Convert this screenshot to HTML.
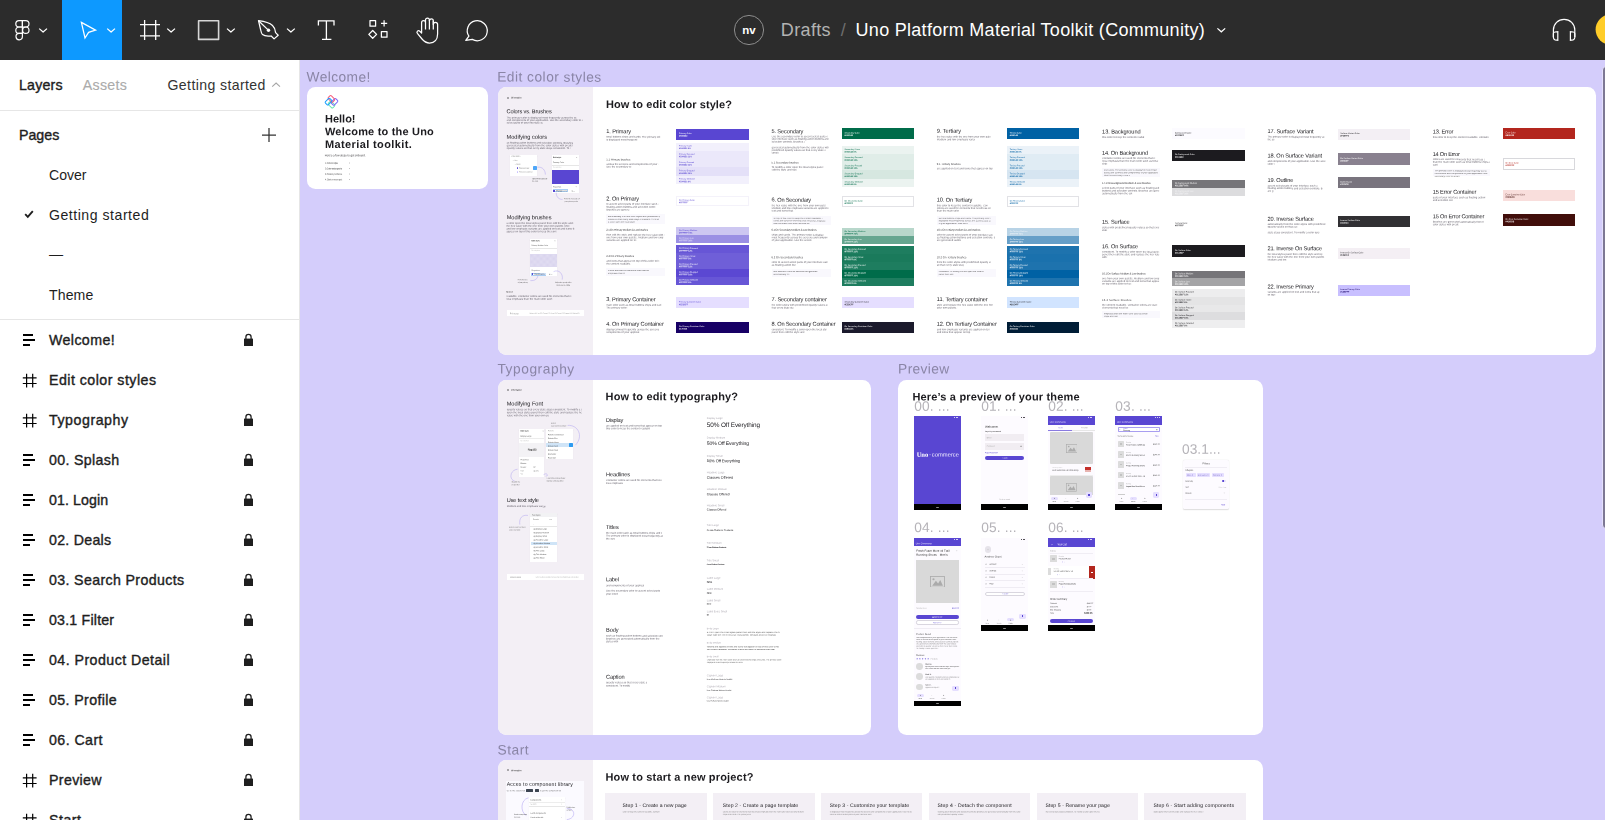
<!DOCTYPE html>
<html><head><meta charset="utf-8"><title>Uno Platform Material Toolkit (Community) – Figma</title>
<style>
*{box-sizing:border-box;margin:0;padding:0}
html,body{width:1605px;height:820px;overflow:hidden;background:#d4cdfb;font-family:"Liberation Sans",sans-serif;}
.abs{position:absolute}
#tb{position:absolute;left:0;top:0;width:1605px;height:60px;background:#2c2c2c}
#tb svg{position:absolute;overflow:visible}
#sel{position:absolute;left:62px;top:0;width:60px;height:60px;background:#0d99ff}
#title{position:absolute;top:0;height:60px;line-height:60px;font-size:17.5px;color:#fff;white-space:nowrap}
#lp{position:absolute;left:0;top:60px;width:300px;height:760px;background:#fff;border-right:1px solid #e6e6e6;overflow:hidden}
#lp .t{position:absolute;font-size:14.1px;line-height:20px;margin-top:0;color:#1e1e1e;white-space:nowrap}
#lp .b{margin-top:0;font-weight:normal;-webkit-text-stroke-width:0.38px;font-size:14.2px}
#lp svg{position:absolute;overflow:visible}
.hr{position:absolute;left:0;width:299px;height:1px;background:#e6e6e6}
#cv{position:absolute;left:0;top:0;width:1605px;height:820px;background:#d4cdfb;overflow:hidden}
#cvi{position:absolute;left:0;top:0;width:1605px;height:820px;will-change:transform;text-rendering:geometricPrecision}
#cv .a{position:absolute}
#cvs{position:absolute;left:0;top:0;width:1605px;height:820px;transform-origin:0 0;transform:matrix(1,.0006,0,1,0,0)}
#cv .t{position:absolute;left:0;top:0;white-space:nowrap}
.fl{position:absolute;font-size:15px;line-height:18px;color:#8b86a8;white-space:nowrap}
.fr{position:absolute;background:#fff;border-radius:8px;overflow:hidden}
.sb{position:absolute;left:0;top:0;bottom:0;background:#f3eff5}
</style></head><body>
<div id="cv">
<!--C0-->
<div id="cvi">
<div class="a" style="left:1602.4px;top:66.2px;width:8px;height:462.4px;background:#7d7894;border-radius:4px;border:1px solid #e4dffc"></div>
<div class="a" style="left:306.6px;top:87.2px;width:181.2px;height:101.9px;background:#fff;border-radius:8.5px;overflow:hidden">
</div>
<div class="a" style="left:497.9px;top:86.9px;width:1098.1px;height:268px;background:#fff;border-radius:8.5px;overflow:hidden">
<div class="a" style="left:0;top:0;width:95.1px;height:100%;background:#f3eff5"></div>
</div>
<div class="a" style="left:497.9px;top:379.9px;width:373.3px;height:355.4px;background:#fff;border-radius:8.5px;overflow:hidden">
<div class="a" style="left:0;top:0;width:95.1px;height:100%;background:#f3eff5"></div>
</div>
<div class="a" style="left:898px;top:379.9px;width:365.1px;height:355.4px;background:#fff;border-radius:8.5px;overflow:hidden">
</div>
<div class="a" style="left:497.9px;top:759.8px;width:765.2px;height:80.2px;background:#fff;border-radius:8.5px;overflow:hidden">
<div class="a" style="left:0;top:0;width:95.1px;height:100%;background:#f3eff5"></div>
</div>
<svg class="a" style="left:322px;top:92px" width="20" height="20" viewBox="322 92 20 20" fill="none" stroke-width=".95"><rect x="-3.2" y="-2.15" width="6.4" height="4.3" rx="1.1" transform="translate(331.5 104.7) rotate(45)" stroke="#67e5ad"/><rect x="-3.2" y="-2.15" width="6.4" height="4.3" rx="1.1" transform="translate(334.5 101.9) rotate(-45)" stroke="#7a67f8"/><rect x="-3.2" y="-2.15" width="6.4" height="4.3" rx="1.1" transform="translate(331.4 98.9) rotate(45)" stroke="#f85977"/><rect x="-3.2" y="-2.15" width="6.4" height="4.3" rx="1.1" transform="translate(328.5 101.6) rotate(-45)" stroke="#159bff"/></svg>
<div class="a" style="left:507px;top:96.6px;width:2.2px;height:2.2px;border:.4px solid #777;border-radius:50%"></div>
<div class="a" style="left:510.2px;top:154.5px;width:26.8px;height:21.4px;background:#fff;box-shadow:0 .3px 1px rgba(0,0,0,.12)"></div>
<div class="a" style="left:516.6px;top:167.3px;width:1.5px;height:1.5px;background:#5946d2;border-radius:50%"></div>
<div class="a" style="left:516.6px;top:171.1px;width:1.5px;height:1.5px;background:#c8bfff;border-radius:50%"></div>
<div class="a" style="left:533.2px;top:166px;width:3.8px;height:4.1px;background:#4ea6f8;border-radius:.4px"></div>
<svg class="a" style="left:537px;top:166px" width="12" height="12" viewBox="0 0 12 12" fill="none" stroke="#a89bf0" stroke-width=".45"><path d="M.4 1.2C5.6 .6 8.2 4 8.4 8.6"/></svg>
<div class="a" style="left:551.5px;top:155px;width:27.5px;height:37.9px;background:#fff;box-shadow:0 .3px 1px rgba(0,0,0,.12)"></div>
<div class="a" style="left:551.5px;top:165px;width:27.5px;height:0.3px;background:#e6e6e6"></div>
<div class="a" style="left:551.5px;top:170.1px;width:27.5px;height:13.7px;background:#5946d2"></div>
<div class="a" style="left:552.6px;top:189.2px;width:15.2px;height:3.2px;background:#fff;border:.35px solid #a9cdf2"></div>
<div class="a" style="left:553.4px;top:190px;width:1.7px;height:1.7px;background:#5946d2"></div>
<svg class="a" style="left:555px;top:192px" width="12" height="10" viewBox="0 0 12 10" fill="none" stroke="#a89bf0" stroke-width=".45"><path d="M1.2 .6C1.4 5.6 4 7.4 7.6 7.4"/></svg>
<div class="a" style="left:530.1px;top:238.5px;width:27px;height:37.6px;background:#fff;box-shadow:0 .3px 1px rgba(0,0,0,.12)"></div>
<div class="a" style="left:530.1px;top:247.6px;width:27px;height:0.3px;background:#e6e6e6"></div>
<div class="a" style="left:530.1px;top:253.7px;width:27px;height:13.7px;background:#dad5ee;background-image:repeating-conic-gradient(#e2def2 0 25%,#d8d3ed 0 50%);background-size:1.2px 1.2px"></div>
<div class="a" style="left:531px;top:272.6px;width:15.4px;height:3.1px;background:#fff;border:.35px solid #a9cdf2"></div>
<div class="a" style="left:531.8px;top:273.4px;width:1.6px;height:1.6px;background:#5946d2"></div>
<div class="a" style="left:540.4px;top:272.8px;width:5.6px;height:2.7px;background:#cfe2f7"></div>
<svg class="a" style="left:528px;top:268px" width="36" height="16" viewBox="0 0 36 16" fill="none" stroke="#a89bf0" stroke-width=".45"><path d="M2.4 12.6C7 13 9.6 10.6 9.8 7.8M25.6 3.6C31 1 35.4 6 34.2 11.6"/></svg>
<div class="a" style="left:506.7px;top:310.3px;width:77.1px;height:5.9px;background:#fff"></div>
<div class="a" style="left:676.3px;top:128.7px;width:72.5px;height:11.1px;background:#5946d2"></div>
<div class="a" style="left:676.3px;top:142.6px;width:72.5px;height:8.31px;background:#f2f0fc"></div>
<div class="a" style="left:676.3px;top:150.86px;width:72.5px;height:8.31px;background:#ebe8fa"></div>
<div class="a" style="left:676.3px;top:159.12px;width:72.5px;height:8.31px;background:#ebe8fa"></div>
<div class="a" style="left:676.3px;top:167.38px;width:72.5px;height:8.31px;background:#e4e0f8"></div>
<div class="a" style="left:676.3px;top:175.64px;width:72.5px;height:8.31px;background:#f2f0fc"></div>
<div class="a" style="left:676.3px;top:195.6px;width:72.5px;height:10.8px;background:#fff;border:.5px solid #f4f2fa"></div>
<div class="a" style="left:606.2px;top:214.3px;width:59.3px;height:9.5px;background:#f9f8fd"></div>
<div class="a" style="left:676.3px;top:227.3px;width:72.5px;height:7.7px;background:#cdc7f1"></div>
<div class="a" style="left:676.3px;top:235px;width:72.5px;height:7.9px;background:#9b90e4"></div>
<div class="a" style="left:676.3px;top:245.1px;width:72.5px;height:7.97px;background:#6756d6"></div>
<div class="a" style="left:676.3px;top:253.02px;width:72.5px;height:7.97px;background:#6f5fd8"></div>
<div class="a" style="left:676.3px;top:260.94px;width:72.5px;height:7.97px;background:#6f5fd8"></div>
<div class="a" style="left:676.3px;top:268.86px;width:72.5px;height:7.97px;background:#5b48d2"></div>
<div class="a" style="left:676.3px;top:276.78px;width:72.5px;height:7.97px;background:#6756d6"></div>
<div class="a" style="left:606.2px;top:268.2px;width:59.3px;height:8px;background:#f9f8fd"></div>
<div class="a" style="left:676.3px;top:297.1px;width:72.5px;height:11.4px;background:#e5deff"></div>
<div class="a" style="left:676.3px;top:321.5px;width:72.5px;height:11.5px;background:#170065"></div>
<div class="a" style="left:841.6px;top:128px;width:72.5px;height:11.2px;background:#006c4a"></div>
<div class="a" style="left:841.6px;top:146.1px;width:72.5px;height:8.17px;background:#ebf3f0"></div>
<div class="a" style="left:841.6px;top:154.22px;width:72.5px;height:8.17px;background:#e0ede8"></div>
<div class="a" style="left:841.6px;top:162.34px;width:72.5px;height:8.17px;background:#e0ede8"></div>
<div class="a" style="left:841.6px;top:170.46px;width:72.5px;height:8.17px;background:#d6e7e0"></div>
<div class="a" style="left:841.6px;top:178.58px;width:72.5px;height:8.17px;background:#ebf3f0"></div>
<div class="a" style="left:841.6px;top:196.2px;width:72.5px;height:11.1px;background:#fff;border:.5px solid #e2e2e6"></div>
<div class="a" style="left:771.5px;top:215.9px;width:59.3px;height:9.5px;background:#f9f8fd"></div>
<div class="a" style="left:841.6px;top:228.3px;width:72.5px;height:7.9px;background:#b8d7cb"></div>
<div class="a" style="left:841.6px;top:236.2px;width:72.5px;height:7.9px;background:#66a690"></div>
<div class="a" style="left:841.6px;top:246px;width:72.5px;height:7.99px;background:#1e7d5f"></div>
<div class="a" style="left:841.6px;top:253.94px;width:72.5px;height:7.99px;background:#1a7a5b"></div>
<div class="a" style="left:841.6px;top:261.88px;width:72.5px;height:7.99px;background:#1e7d5f"></div>
<div class="a" style="left:841.6px;top:269.82px;width:72.5px;height:7.99px;background:#006c4a"></div>
<div class="a" style="left:841.6px;top:277.76px;width:72.5px;height:7.99px;background:#1e7d5f"></div>
<div class="a" style="left:771.5px;top:269.2px;width:59.3px;height:7.9px;background:#f9f8fd"></div>
<div class="a" style="left:841.6px;top:297.1px;width:72.5px;height:11.4px;background:#e5deff"></div>
<div class="a" style="left:841.6px;top:321.5px;width:72.5px;height:11.5px;background:#1b1a2c"></div>
<div class="a" style="left:1006.9px;top:128px;width:72.5px;height:11.2px;background:#0061a4"></div>
<div class="a" style="left:1006.9px;top:146.1px;width:72.5px;height:8.17px;background:#ebf2f8"></div>
<div class="a" style="left:1006.9px;top:154.22px;width:72.5px;height:8.17px;background:#e0ecf4"></div>
<div class="a" style="left:1006.9px;top:162.34px;width:72.5px;height:8.17px;background:#e0ecf4"></div>
<div class="a" style="left:1006.9px;top:170.46px;width:72.5px;height:8.17px;background:#d6e5f1"></div>
<div class="a" style="left:1006.9px;top:178.58px;width:72.5px;height:8.17px;background:#ebf2f8"></div>
<div class="a" style="left:1006.9px;top:196.2px;width:72.5px;height:11.1px;background:#fff;border:.5px solid #e2e2e6"></div>
<div class="a" style="left:936.8px;top:215.9px;width:59.3px;height:9.5px;background:#f9f8fd"></div>
<div class="a" style="left:1006.9px;top:228.3px;width:72.5px;height:7.9px;background:#b8d3e6"></div>
<div class="a" style="left:1006.9px;top:236.2px;width:72.5px;height:7.9px;background:#669fc8"></div>
<div class="a" style="left:1006.9px;top:246px;width:72.5px;height:7.99px;background:#1e73ae"></div>
<div class="a" style="left:1006.9px;top:253.94px;width:72.5px;height:7.99px;background:#1a71ad"></div>
<div class="a" style="left:1006.9px;top:261.88px;width:72.5px;height:7.99px;background:#1e73ae"></div>
<div class="a" style="left:1006.9px;top:269.82px;width:72.5px;height:7.99px;background:#0061a4"></div>
<div class="a" style="left:1006.9px;top:277.76px;width:72.5px;height:7.99px;background:#1e73ae"></div>
<div class="a" style="left:936.8px;top:269.2px;width:59.3px;height:7.9px;background:#f9f8fd"></div>
<div class="a" style="left:1006.9px;top:297.1px;width:72.5px;height:11.4px;background:#d1e4ff"></div>
<div class="a" style="left:1006.9px;top:321.5px;width:72.5px;height:11.5px;background:#001d36"></div>
<div class="a" style="left:1172.2px;top:128px;width:72.5px;height:11.2px;background:#fcfbff"></div>
<div class="a" style="left:1172.2px;top:149.6px;width:72.5px;height:11.4px;background:#1c1b1f"></div>
<div class="a" style="left:1102.1px;top:167.7px;width:57.5px;height:9.5px;background:#f9f8fd"></div>
<div class="a" style="left:1172.2px;top:180px;width:72.5px;height:8px;background:#767579"></div>
<div class="a" style="left:1172.2px;top:188px;width:72.5px;height:8px;background:#dcdcde"></div>
<div class="a" style="left:1172.2px;top:218.4px;width:72.5px;height:11.1px;background:#fff"></div>
<div class="a" style="left:1172.2px;top:245.4px;width:72.5px;height:11.4px;background:#1c1b1f"></div>
<div class="a" style="left:1172.2px;top:270.5px;width:72.5px;height:7.9px;background:#767579"></div>
<div class="a" style="left:1172.2px;top:278.4px;width:72.5px;height:7.9px;background:#a4a4a6"></div>
<div class="a" style="left:1172.2px;top:288.9px;width:72.5px;height:7.85px;background:#ededee"></div>
<div class="a" style="left:1172.2px;top:296.7px;width:72.5px;height:7.85px;background:#e4e4e5"></div>
<div class="a" style="left:1172.2px;top:304.5px;width:72.5px;height:7.85px;background:#e8e8e9"></div>
<div class="a" style="left:1172.2px;top:312.3px;width:72.5px;height:7.85px;background:#dddddf"></div>
<div class="a" style="left:1172.2px;top:320.1px;width:72.5px;height:7.85px;background:#eeeeef"></div>
<div class="a" style="left:1102.1px;top:311.4px;width:57.5px;height:7px;background:#f9f8fd"></div>
<div class="a" style="left:1337.5px;top:128.7px;width:72.5px;height:11.1px;background:#f3eff4"></div>
<div class="a" style="left:1337.5px;top:153.4px;width:72.5px;height:11.4px;background:#89818f"></div>
<div class="a" style="left:1337.5px;top:177.2px;width:72.5px;height:11.1px;background:#79747e"></div>
<div class="a" style="left:1337.5px;top:215.5px;width:72.5px;height:11.4px;background:#313033"></div>
<div class="a" style="left:1337.5px;top:247.8px;width:72.5px;height:11.1px;background:#f4eff4"></div>
<div class="a" style="left:1337.5px;top:284.6px;width:72.5px;height:11.1px;background:#c8bfff"></div>
<div class="a" style="left:1502.8px;top:128px;width:72.5px;height:11.1px;background:#b3261e"></div>
<div class="a" style="left:1502.8px;top:157.8px;width:72.5px;height:11.8px;background:#fff;border:.5px solid #d8d8dc"></div>
<div class="a" style="left:1432.7px;top:168.6px;width:57.2px;height:7.6px;background:#f9f8fd"></div>
<div class="a" style="left:1502.8px;top:189.8px;width:72.5px;height:11.1px;background:#f9dedc"></div>
<div class="a" style="left:1502.8px;top:214.2px;width:72.5px;height:11.5px;background:#410e0b"></div>
<div class="a" style="left:507.2px;top:388.9px;width:2.2px;height:2.2px;border:.4px solid #777;border-radius:50%"></div>
<div class="a" style="left:518.9px;top:428.5px;width:25.5px;height:48.5px;background:#fff;box-shadow:0 .3px 1px rgba(0,0,0,.12)"></div>
<div class="a" style="left:518.9px;top:438.3px;width:25.5px;height:0.3px;background:#ececec"></div>
<div class="a" style="left:518.9px;top:442.8px;width:25.5px;height:13.8px;background:#f3f2f5"></div>
<div class="a" style="left:546.2px;top:428.5px;width:26.8px;height:30px;background:#fff;box-shadow:0 .3px 1px rgba(0,0,0,.12)"></div>
<div class="a" style="left:546.2px;top:443.4px;width:26.8px;height:3.6px;background:#cfe4f7"></div>
<div class="a" style="left:569px;top:443.4px;width:4px;height:3.6px;background:#2e9bf0;border-radius:.4px"></div>
<svg class="a" style="left:505px;top:420px" width="80" height="70" viewBox="505 420 80 70" fill="none" stroke="#a89bf0" stroke-width=".45"><path d="M567.6 425.4C578 424.6 584 436 575.4 445.2M517.6 469.2C509.6 470 509 479.8 514.6 481M543.6 474.6C547.6 472 548.6 476.6 545.6 476.2"/></svg>
<div class="a" style="left:530.4px;top:512.9px;width:26.8px;height:49.2px;background:#fff;box-shadow:0 .3px 1px rgba(0,0,0,.12)"></div>
<div class="a" style="left:530.4px;top:512.9px;width:26.8px;height:4.4px;background:#f2f2f4"></div>
<div class="a" style="left:530.4px;top:526.2px;width:26.8px;height:0.3px;background:#e6e6e6"></div>
<div class="a" style="left:530.9px;top:541.9px;width:25.8px;height:3px;background:#cfe4f7"></div>
<svg class="a" style="left:515px;top:510px" width="20" height="16" viewBox="515 510 20 16" fill="none" stroke="#a89bf0" stroke-width=".45"><path d="M519.8 524.6C519 518 522 514.6 528 515.4"/></svg>
<div class="a" style="left:506.6px;top:573.7px;width:77.6px;height:6.7px;background:#fff"></div>
<div class="a" style="left:914.2px;top:416.1px;width:46.7px;height:93.6px;background:#5946d2"></div>
<div class="a" style="left:914.2px;top:504.3px;width:46.7px;height:5.4px;background:#000"></div>
<div class="a" style="left:935.7px;top:506.7px;width:3.4px;height:0.8px;background:#8a8a8a;border-radius:.4px"></div>
<div class="a" style="left:953.8px;top:417.1px;width:1px;height:1px;background:#fff;border-radius:50%"></div>
<div class="a" style="left:955.6px;top:417.1px;width:1px;height:1px;background:#fff;border-radius:50%"></div>
<div class="a" style="left:957.4px;top:417.1px;width:1px;height:1px;background:#fff;border-radius:50%"></div>
<div class="a" style="left:981.2px;top:416.1px;width:46.7px;height:93.6px;background:#fdfbff"></div>
<div class="a" style="left:981.2px;top:504.3px;width:46.7px;height:5.4px;background:#000"></div>
<div class="a" style="left:1002.7px;top:506.7px;width:3.4px;height:0.8px;background:#8a8a8a;border-radius:.4px"></div>
<div class="a" style="left:1020.8px;top:417.1px;width:1px;height:1px;background:#1c1b1f;border-radius:50%"></div>
<div class="a" style="left:1022.6px;top:417.1px;width:1px;height:1px;background:#1c1b1f;border-radius:50%"></div>
<div class="a" style="left:1024.4px;top:417.1px;width:1px;height:1px;background:#1c1b1f;border-radius:50%"></div>
<div class="a" style="left:985px;top:434.4px;width:39px;height:6.7px;background:#f1edf2"></div>
<div class="a" style="left:985px;top:443px;width:39px;height:6.7px;background:#f1edf2"></div>
<div class="a" style="left:985px;top:455.8px;width:39px;height:4px;background:#5946d2;border-radius:2px"></div>
<div class="a" style="left:1048.2px;top:416.1px;width:46.7px;height:93.6px;background:#fdfbff"></div>
<div class="a" style="left:1048.2px;top:504.3px;width:46.7px;height:5.4px;background:#000"></div>
<div class="a" style="left:1069.7px;top:506.7px;width:3.4px;height:0.8px;background:#8a8a8a;border-radius:.4px"></div>
<div class="a" style="left:1087.8px;top:417.1px;width:1px;height:1px;background:#1c1b1f;border-radius:50%"></div>
<div class="a" style="left:1089.6px;top:417.1px;width:1px;height:1px;background:#1c1b1f;border-radius:50%"></div>
<div class="a" style="left:1091.4px;top:417.1px;width:1px;height:1px;background:#1c1b1f;border-radius:50%"></div>
<div class="a" style="left:1048.2px;top:416.1px;width:46.7px;height:8.6px;background:#5946d2"></div>
<div class="a" style="left:1087.8px;top:417.1px;width:1px;height:1px;background:#fff;border-radius:50%"></div>
<div class="a" style="left:1089.6px;top:417.1px;width:1px;height:1px;background:#fff;border-radius:50%"></div>
<div class="a" style="left:1091.4px;top:417.1px;width:1px;height:1px;background:#fff;border-radius:50%"></div>
<div class="a" style="left:1048.2px;top:430.3px;width:23.4px;height:0.35px;background:#8a7be0"></div>
<div class="a" style="left:1071.6px;top:430.4px;width:23.3px;height:0.25px;background:#e6e6e6"></div>
<div class="a" style="left:1050.2px;top:432.3px;width:42.8px;height:31.7px;background:#d9d9d9;border-radius:1px"></div>
<svg class="a" style="left:1065.83px;top:443.64px" width="11.55" height="9.03" viewBox="0 0 11 8.6" fill="none"><rect x=".3" y=".3" width="10.4" height="8" stroke="#ababab" stroke-width=".6"/><path d="M1.6 7.2L4.4 3.6 6 5.6 7.6 3 9.6 7.2z" fill="#ababab"/><circle cx="2.6" cy="2.4" r=".8" fill="#ababab"/></svg>
<div class="a" style="left:1085px;top:466.6px;width:6.2px;height:5.2px;background:#c4302b"></div>
<div class="a" style="left:1085px;top:470px;width:6.2px;height:1.8px;background:#e8b4b1"></div>
<div class="a" style="left:1049.8px;top:474.6px;width:43.6px;height:0.25px;background:#eee"></div>
<div class="a" style="left:1050.2px;top:476.3px;width:42.8px;height:22px;background:#d9d9d9;border-radius:1px"></div>
<svg class="a" style="left:1066.1px;top:483px" width="11" height="8.6" viewBox="0 0 11 8.6" fill="none"><rect x=".3" y=".3" width="10.4" height="8" stroke="#ababab" stroke-width=".6"/><path d="M1.6 7.2L4.4 3.6 6 5.6 7.6 3 9.6 7.2z" fill="#ababab"/><circle cx="2.6" cy="2.4" r=".8" fill="#ababab"/></svg>
<div class="a" style="left:1048.2px;top:495px;width:46.7px;height:9.3px;background:#fdfbff"></div>
<div class="a" style="left:1050.8px;top:496.6px;width:7.2px;height:3.2px;background:#e5deff;border-radius:1.6px"></div>
<div class="a" style="left:1086.2px;top:492.4px;width:6.2px;height:5.6px;background:#e5deff;border-radius:1.4px"></div>
<div class="a" style="left:1088.4px;top:494.2px;width:1.8px;height:1.9px;background:#5946d2"></div>
<div class="a" style="left:1115.3px;top:416.1px;width:46.7px;height:93.6px;background:#fdfbff"></div>
<div class="a" style="left:1115.3px;top:504.3px;width:46.7px;height:5.4px;background:#000"></div>
<div class="a" style="left:1136.8px;top:506.7px;width:3.4px;height:0.8px;background:#8a8a8a;border-radius:.4px"></div>
<div class="a" style="left:1154.9px;top:417.1px;width:1px;height:1px;background:#1c1b1f;border-radius:50%"></div>
<div class="a" style="left:1156.7px;top:417.1px;width:1px;height:1px;background:#1c1b1f;border-radius:50%"></div>
<div class="a" style="left:1158.5px;top:417.1px;width:1px;height:1px;background:#1c1b1f;border-radius:50%"></div>
<div class="a" style="left:1115.3px;top:416.1px;width:46.7px;height:8.6px;background:#5946d2"></div>
<div class="a" style="left:1154.9px;top:417.1px;width:1px;height:1px;background:#fff;border-radius:50%"></div>
<div class="a" style="left:1156.7px;top:417.1px;width:1px;height:1px;background:#fff;border-radius:50%"></div>
<div class="a" style="left:1158.5px;top:417.1px;width:1px;height:1px;background:#fff;border-radius:50%"></div>
<div class="a" style="left:1117.5px;top:426.6px;width:42.4px;height:5.6px;background:#fff;border:.4px solid #a89df0;border-radius:.8px"></div>
<div class="a" style="left:1117.5px;top:440.6px;width:6.6px;height:6.6px;background:#dcdcdc;border-radius:.6px"></div>
<div class="a" style="left:1119.6px;top:443.1px;width:2.4px;height:1.6px;background:#c2c2c2"></div>
<div class="a" style="left:1117.5px;top:451px;width:6.6px;height:6.6px;background:#dcdcdc;border-radius:.6px"></div>
<div class="a" style="left:1119.6px;top:453.5px;width:2.4px;height:1.6px;background:#c2c2c2"></div>
<div class="a" style="left:1117.5px;top:461.4px;width:6.6px;height:6.6px;background:#dcdcdc;border-radius:.6px"></div>
<div class="a" style="left:1119.6px;top:463.9px;width:2.4px;height:1.6px;background:#c2c2c2"></div>
<div class="a" style="left:1117.5px;top:471.8px;width:6.6px;height:6.6px;background:#dcdcdc;border-radius:.6px"></div>
<div class="a" style="left:1119.6px;top:474.3px;width:2.4px;height:1.6px;background:#c2c2c2"></div>
<div class="a" style="left:1117.5px;top:482.2px;width:6.6px;height:6.6px;background:#dcdcdc;border-radius:.6px"></div>
<div class="a" style="left:1119.6px;top:484.7px;width:2.4px;height:1.6px;background:#c2c2c2"></div>
<div class="a" style="left:1117.5px;top:494.3px;width:7px;height:0.3px;background:#ccc"></div>
<div class="a" style="left:1115.3px;top:495.4px;width:46.7px;height:8.9px;background:#fdfbff"></div>
<div class="a" style="left:1129.5px;top:496.6px;width:7.2px;height:3.2px;background:#e5deff;border-radius:1.6px"></div>
<div class="a" style="left:1153.3px;top:492.4px;width:6.2px;height:5.6px;background:#e5deff;border-radius:1.4px"></div>
<div class="a" style="left:1155.5px;top:494.2px;width:1.8px;height:1.9px;background:#5946d2"></div>
<div class="a" style="left:1182.9px;top:459.6px;width:45.7px;height:49px;background:#fdfbff;border-radius:1.6px;box-shadow:0 .4px 1.2px rgba(0,0,0,.14)"></div>
<div class="a" style="left:1184.9px;top:467.2px;width:41.7px;height:0.25px;background:#f0edf4"></div>
<div class="a" style="left:1185.5px;top:473.4px;width:10px;height:3.4px;background:#e5deff;border-radius:.8px"></div>
<div class="a" style="left:1196.7px;top:473.4px;width:13.6px;height:3.4px;background:#e5deff;border-radius:.8px"></div>
<div class="a" style="left:1211.5px;top:473.4px;width:12.4px;height:3.4px;background:#e5deff;border-radius:.8px"></div>
<div class="a" style="left:1222.3px;top:479.8px;width:4px;height:2.4px;background:#5946d2;border-radius:1.2px"></div>
<div class="a" style="left:1224.4px;top:480.2px;width:1.6px;height:1.6px;background:#fff;border-radius:50%"></div>
<div class="a" style="left:1184.9px;top:499.4px;width:41.7px;height:0.25px;background:#f0edf4"></div>
<div class="a" style="left:914.2px;top:537.6px;width:46.7px;height:168.4px;background:#fdfbff"></div>
<div class="a" style="left:914.2px;top:700.6px;width:46.7px;height:5.4px;background:#000"></div>
<div class="a" style="left:935.7px;top:703px;width:3.4px;height:0.8px;background:#8a8a8a;border-radius:.4px"></div>
<div class="a" style="left:953.8px;top:538.6px;width:1px;height:1px;background:#1c1b1f;border-radius:50%"></div>
<div class="a" style="left:955.6px;top:538.6px;width:1px;height:1px;background:#1c1b1f;border-radius:50%"></div>
<div class="a" style="left:957.4px;top:538.6px;width:1px;height:1px;background:#1c1b1f;border-radius:50%"></div>
<div class="a" style="left:914.2px;top:537.6px;width:46.7px;height:8.6px;background:#5946d2"></div>
<div class="a" style="left:953.8px;top:538.6px;width:1px;height:1px;background:#fff;border-radius:50%"></div>
<div class="a" style="left:955.6px;top:538.6px;width:1px;height:1px;background:#fff;border-radius:50%"></div>
<div class="a" style="left:957.4px;top:538.6px;width:1px;height:1px;background:#fff;border-radius:50%"></div>
<div class="a" style="left:916.2px;top:560.2px;width:42.8px;height:42.8px;background:#d9d9d9;border-radius:0px"></div>
<svg class="a" style="left:930.18px;top:575.8px" width="14.85" height="11.61" viewBox="0 0 11 8.6" fill="none"><rect x=".3" y=".3" width="10.4" height="8" stroke="#ababab" stroke-width=".6"/><path d="M1.6 7.2L4.4 3.6 6 5.6 7.6 3 9.6 7.2z" fill="#ababab"/><circle cx="2.6" cy="2.4" r=".8" fill="#ababab"/></svg>
<div class="a" style="left:916.2px;top:614.8px;width:42.8px;height:4px;background:#5946d2;border-radius:2px"></div>
<div class="a" style="left:916.2px;top:620.4px;width:42.8px;height:4.2px;background:#fff;border:.35px solid #d9d6df;border-radius:2.1px"></div>
<div class="a" style="left:914.2px;top:627.6px;width:46.7px;height:0.3px;background:#efecf3"></div>
<div class="a" style="left:916.2px;top:662.8px;width:6.8px;height:6.8px;background:#dcdcdc;border-radius:50%"></div>
<div class="a" style="left:916.2px;top:673.2px;width:6.8px;height:6.8px;background:#dcdcdc;border-radius:50%"></div>
<div class="a" style="left:916.2px;top:683.6px;width:6.8px;height:6.8px;background:#dcdcdc;border-radius:50%"></div>
<div class="a" style="left:914.2px;top:691.6px;width:46.7px;height:9.6px;background:#fdfbff"></div>
<div class="a" style="left:916.8px;top:693.6px;width:7.2px;height:3.2px;background:#e5deff;border-radius:1.6px"></div>
<div class="a" style="left:952.4px;top:685.6px;width:6.2px;height:5.6px;background:#e5deff;border-radius:1.4px"></div>
<div class="a" style="left:954.6px;top:687.4px;width:1.8px;height:1.9px;background:#5946d2"></div>
<div class="a" style="left:981.2px;top:537.6px;width:46.7px;height:93.2px;background:#fdfbff"></div>
<div class="a" style="left:981.2px;top:625.4px;width:46.7px;height:5.4px;background:#000"></div>
<div class="a" style="left:1002.7px;top:627.8px;width:3.4px;height:0.8px;background:#8a8a8a;border-radius:.4px"></div>
<div class="a" style="left:1020.8px;top:538.6px;width:1px;height:1px;background:#1c1b1f;border-radius:50%"></div>
<div class="a" style="left:1022.6px;top:538.6px;width:1px;height:1px;background:#1c1b1f;border-radius:50%"></div>
<div class="a" style="left:1024.4px;top:538.6px;width:1px;height:1px;background:#1c1b1f;border-radius:50%"></div>
<div class="a" style="left:984.6px;top:546px;width:6.6px;height:6.6px;background:#e6e3ea;border-radius:50%"></div>
<div class="a" style="left:984.6px;top:567.4px;width:40.4px;height:0.25px;background:#efecf3"></div>
<div class="a" style="left:984.6px;top:573.9px;width:40.4px;height:0.25px;background:#efecf3"></div>
<div class="a" style="left:984.6px;top:580.4px;width:40.4px;height:0.25px;background:#efecf3"></div>
<div class="a" style="left:984.6px;top:586.9px;width:40.4px;height:0.25px;background:#efecf3"></div>
<div class="a" style="left:984.6px;top:591.6px;width:40.6px;height:4px;background:#fff;border:.35px solid #d9d6df;border-radius:2px"></div>
<div class="a" style="left:981.2px;top:616.4px;width:46.7px;height:9px;background:#fdfbff"></div>
<div class="a" style="left:1007px;top:618.2px;width:7.2px;height:3.2px;background:#e5deff;border-radius:1.6px"></div>
<div class="a" style="left:1019.4px;top:613.6px;width:6.2px;height:5.6px;background:#e5deff;border-radius:1.4px"></div>
<div class="a" style="left:1021.6px;top:615.4px;width:1.8px;height:1.9px;background:#5946d2"></div>
<div class="a" style="left:1048.2px;top:537.6px;width:46.7px;height:93.2px;background:#fdfbff"></div>
<div class="a" style="left:1048.2px;top:625.4px;width:46.7px;height:5.4px;background:#000"></div>
<div class="a" style="left:1069.7px;top:627.8px;width:3.4px;height:0.8px;background:#8a8a8a;border-radius:.4px"></div>
<div class="a" style="left:1087.8px;top:538.6px;width:1px;height:1px;background:#1c1b1f;border-radius:50%"></div>
<div class="a" style="left:1089.6px;top:538.6px;width:1px;height:1px;background:#1c1b1f;border-radius:50%"></div>
<div class="a" style="left:1091.4px;top:538.6px;width:1px;height:1px;background:#1c1b1f;border-radius:50%"></div>
<div class="a" style="left:1048.2px;top:537.6px;width:46.7px;height:9.6px;background:#5946d2"></div>
<div class="a" style="left:1087.8px;top:538.6px;width:1px;height:1px;background:#fff;border-radius:50%"></div>
<div class="a" style="left:1089.6px;top:538.6px;width:1px;height:1px;background:#fff;border-radius:50%"></div>
<div class="a" style="left:1091.4px;top:538.6px;width:1px;height:1px;background:#fff;border-radius:50%"></div>
<div class="a" style="left:1049.8px;top:553px;width:43.6px;height:0.25px;background:#f0edf4"></div>
<div class="a" style="left:1050.2px;top:555.4px;width:7px;height:7px;background:#dcdcdc;border-radius:.6px"></div>
<div class="a" style="left:1052.4px;top:558.1px;width:2.6px;height:1.7px;background:#c2c2c2"></div>
<div class="a" style="left:1049.8px;top:565.8px;width:43.6px;height:0.25px;background:#f0edf4"></div>
<div class="a" style="left:1048.2px;top:566.4px;width:46.7px;height:12.2px;background:#fff"></div>
<div class="a" style="left:1089px;top:566.4px;width:5.9px;height:12.2px;background:#b3261e"></div>
<div class="a" style="left:1091.2px;top:571.6px;width:1.5px;height:1.8px;background:#fff"></div>
<div class="a" style="left:1048.2px;top:568px;width:2.4px;height:7px;background:#dcdcdc"></div>
<div class="a" style="left:1049.8px;top:578.4px;width:43.6px;height:0.25px;background:#f0edf4"></div>
<div class="a" style="left:1050.2px;top:580.6px;width:7px;height:7px;background:#dcdcdc;border-radius:.6px"></div>
<div class="a" style="left:1052.4px;top:583.3px;width:2.6px;height:1.7px;background:#c2c2c2"></div>
<div class="a" style="left:1049.8px;top:591px;width:43.6px;height:0.25px;background:#f0edf4"></div>
<div class="a" style="left:1050.2px;top:619.2px;width:42.8px;height:4px;background:#5946d2;border-radius:2px"></div>
<div class="a" style="left:507px;top:769.3px;width:2.2px;height:2.2px;border:.4px solid #777;border-radius:50%"></div>
<div class="a" style="left:506.2px;top:781.1px;width:78px;height:60px;background:#fbfaff"></div>
<div class="a" style="left:526.1px;top:789.4px;width:6.8px;height:2.4px;background:#3c4451;border-radius:.5px"></div>
<div class="a" style="left:535px;top:789.4px;width:3.6px;height:2.4px;background:#3c4451;border-radius:.5px"></div>
<div class="a" style="left:528.6px;top:797.3px;width:36.2px;height:30px;background:#fff;box-shadow:0 .3px 1px rgba(0,0,0,.12)"></div>
<div class="a" style="left:528.6px;top:806.2px;width:36.2px;height:0.3px;background:#e6e6e6"></div>
<div class="a" style="left:528.6px;top:801.9px;width:36.2px;height:0.3px;background:#ededed"></div>
<svg class="a" style="left:515px;top:795px" width="70" height="30" viewBox="515 795 70 30" fill="none" stroke="#a89bf0" stroke-width=".5"><path d="M528.4 797.8C520.4 799.6 520 812 526.4 815.6M566.8 808.6C575.4 807.6 576.6 818.6 566.8 819.6"/></svg>
<div class="a" style="left:605.4px;top:793.1px;width:101.4px;height:40px;background:#f3eff5"></div>
<div class="a" style="left:713.2px;top:793.1px;width:101.4px;height:40px;background:#f3eff5"></div>
<div class="a" style="left:821px;top:793.1px;width:101.4px;height:40px;background:#f3eff5"></div>
<div class="a" style="left:928.8px;top:793.1px;width:101.4px;height:40px;background:#f3eff5"></div>
<div class="a" style="left:1036.6px;top:793.1px;width:101.4px;height:40px;background:#f3eff5"></div>
<div class="a" style="left:1144.4px;top:793.1px;width:101.4px;height:40px;background:#f3eff5"></div>
<div id="cvs">
<div class="t" style="transform:translate(306.6px,68.41px);font-size:13.75px;line-height:18px;color:#8a85a6;letter-spacing:0.40px">Welcome!</div>
<div class="t" style="transform:translate(497.2px,68.29px);font-size:13.75px;line-height:18px;color:#8a85a6;letter-spacing:0.48px">Edit color styles</div>
<div class="t" style="transform:translate(497.4px,360.29px);font-size:13.75px;line-height:18px;color:#8a85a6;letter-spacing:0.55px">Typography</div>
<div class="t" style="transform:translate(898.1px,360.05px);font-size:13.75px;line-height:18px;color:#8a85a6;letter-spacing:0.36px">Preview</div>
<div class="t" style="transform:translate(497.5px,741.29px);font-size:13.75px;line-height:18px;color:#8a85a6;letter-spacing:0.51px">Start</div>
<div class="t" style="transform:translate(325px,112.19px);font-size:11px;line-height:14px;color:#1c1b1f;font-weight:bold;letter-spacing:-0.01px">Hello!</div>
<div class="t" style="transform:translate(325px,124.99px);font-size:11px;line-height:14px;color:#1c1b1f;font-weight:bold;letter-spacing:0.19px">Welcome to the Uno</div>
<div class="t" style="transform:translate(325px,137.69px);font-size:11px;line-height:14px;color:#1c1b1f;font-weight:bold;letter-spacing:0.38px">Material toolkit.</div>
<div class="t" style="transform:translate(324.7px,154.14px);font-size:2.75px;line-height:4px;color:#1c1b1f;letter-spacing:-0.03px">Here's a few steps to get onboard.</div>
<div class="t" style="transform:translate(325px,162.64px);font-size:2.2px;line-height:3px;color:#555;letter-spacing:-0.24px">1. Edit color styles</div>
<div class="t" style="transform:translate(349px,161.63px);font-size:2.4px;line-height:3px;color:#333">•</div>
<div class="t" style="transform:translate(325px,168.14px);font-size:2.2px;line-height:3px;color:#555;letter-spacing:-0.32px">2. Customize typography</div>
<div class="t" style="transform:translate(349px,167.13px);font-size:2.4px;line-height:3px;color:#333">•</div>
<div class="t" style="transform:translate(325px,173.64px);font-size:2.2px;line-height:3px;color:#555;letter-spacing:-0.23px">3. Preview your theme</div>
<div class="t" style="transform:translate(349px,172.63px);font-size:2.4px;line-height:3px;color:#333">•</div>
<div class="t" style="transform:translate(325px,179.14px);font-size:2.2px;line-height:3px;color:#555;letter-spacing:-0.17px">4. Start a new project</div>
<div class="t" style="transform:translate(349px,178.13px);font-size:2.4px;line-height:3px;color:#333">•</div>
<div class="t" style="transform:translate(511px,96.23px);font-size:2.4px;line-height:3px;color:#333;letter-spacing:-0.12px">information</div>
<div class="t" style="transform:translate(506.5px,108.02px);font-size:5.65px;line-height:8px;color:#1c1b1f;letter-spacing:-0.12px">Colors vs. Brushes</div>
<div class="t" style="transform:translate(506.5px,116.1px);font-size:2.65px;line-height:4px;color:#5f5b66;width:70px;overflow:hidden">The primary color is displayed most frequently across the screens</div>
<div class="t" style="transform:translate(506.5px,118.7px);font-size:2.65px;line-height:4px;color:#5f5b66;width:75.8px;overflow:hidden">and components of your application. Use the secondary color to accent</div>
<div class="t" style="transform:translate(506.5px,121.3px);font-size:2.65px;line-height:4px;color:#5f5b66;width:36px;overflow:hidden">select parts of your interface such</div>
<div class="t" style="transform:translate(506.5px,133.52px);font-size:5.65px;line-height:8px;color:#1c1b1f;letter-spacing:-0.02px">Modifying colors</div>
<div class="t" style="transform:translate(506.5px,141.3px);font-size:2.65px;line-height:4px;color:#5f5b66;width:66.5px;overflow:hidden">as floating action buttons and selection controls. Brushes are</div>
<div class="t" style="transform:translate(506.5px,144px);font-size:2.65px;line-height:4px;color:#5f5b66;width:66px;overflow:hidden">generated automatically from the color styles with predefined</div>
<div class="t" style="transform:translate(506.5px,146.7px);font-size:2.65px;line-height:4px;color:#5f5b66;width:64px;overflow:hidden">opacity values so that every state stays consistent. To modify</div>
<div class="t" style="transform:translate(511.5px,155.54px);font-size:1.7px;line-height:3px;color:#555">Color styles</div>
<div class="t" style="transform:translate(512.5px,159.74px);font-size:1.7px;line-height:3px;color:#777">⌄ Uno</div>
<div class="t" style="transform:translate(514.5px,163.54px);font-size:1.7px;line-height:3px;color:#777">⌄ Brush</div>
<div class="t" style="transform:translate(519px,167.44px);font-size:1.7px;line-height:3px;color:#555">Primary Color</div>
<div class="t" style="transform:translate(519px,171.24px);font-size:1.7px;line-height:3px;color:#777">Primary Container</div>
<div class="t" style="transform:translate(532px,177.83px);font-size:1.7px;line-height:3px;color:#555;letter-spacing:-0.22px">Click on Primary color to edit</div>
<div class="t" style="transform:translate(532px,180.33px);font-size:1.7px;line-height:3px;color:#555">the style</div>
<div class="t" style="transform:translate(553px,156.64px);font-size:1.9px;line-height:3px;color:#333;font-weight:bold">Edit style</div>
<div class="t" style="transform:translate(576px,156.79px);font-size:2.2px;line-height:3px;color:#777">×</div>
<div class="t" style="transform:translate(553px,161.71px);font-size:1.8px;line-height:3px;color:#444">Primary Color</div>
<div class="t" style="transform:translate(553px,166.52px);font-size:1.7px;line-height:3px;color:#bbb">Description</div>
<div class="t" style="transform:translate(553px,186.21px);font-size:1.8px;line-height:3px;color:#555">Properties</div>
<div class="t" style="transform:translate(575.5px,186.2px);font-size:2px;line-height:3px;color:#777">+</div>
<div class="t" style="transform:translate(556px,190.21px);font-size:1.8px;line-height:3px;color:#333">5946D2</div>
<div class="t" style="transform:translate(562.6px,190.21px);font-size:1.7px;line-height:3px;color:#666">100%</div>
<div class="t" style="transform:translate(571.5px,191.06px);font-size:1.6px;line-height:2px;color:#888">◉  —</div>
<div class="t" style="transform:translate(564px,197.91px);font-size:1.7px;line-height:3px;color:#555;letter-spacing:-0.04px">Paste the hex code of</div>
<div class="t" style="transform:translate(564.6px,200.61px);font-size:1.7px;line-height:3px;color:#555;letter-spacing:-0.01px">your primary color</div>
<div class="t" style="transform:translate(506.7px,213.82px);font-size:5.65px;line-height:8px;color:#1c1b1f;letter-spacing:-0.06px">Modifying brushes</div>
<div class="t" style="transform:translate(506.3px,221.7px);font-size:2.65px;line-height:4px;color:#5f5b66;width:66.8px;overflow:hidden">a color open the local styles panel then edit the style and replace</div>
<div class="t" style="transform:translate(506.3px,224.5px);font-size:2.65px;line-height:4px;color:#5f5b66;width:63px;overflow:hidden">the hex value with the one from your own palette. Medium</div>
<div class="t" style="transform:translate(506.3px,227.2px);font-size:2.65px;line-height:4px;color:#5f5b66;width:67.7px;overflow:hidden">and low emphasis variants are applied on text and icons that</div>
<div class="t" style="transform:translate(506.3px,229.9px);font-size:2.65px;line-height:4px;color:#5f5b66;width:50px;overflow:hidden">appear on top of this color to keep the content</div>
<div class="t" style="transform:translate(531.4px,239.95px);font-size:1.9px;line-height:3px;color:#333;font-weight:bold">Edit style</div>
<div class="t" style="transform:translate(554.2px,240.11px);font-size:2.2px;line-height:3px;color:#777">×</div>
<div class="t" style="transform:translate(531.4px,244.73px);font-size:1.7px;line-height:3px;color:#444">Primary Medium Color</div>
<div class="t" style="transform:translate(531.4px,249.73px);font-size:1.7px;line-height:3px;color:#bbb">Description</div>
<div class="t" style="transform:translate(531.4px,269.73px);font-size:1.8px;line-height:3px;color:#555">Properties</div>
<div class="t" style="transform:translate(534.3px,273.52px);font-size:1.8px;line-height:3px;color:#333">5946D2</div>
<div class="t" style="transform:translate(541px,273.52px);font-size:1.7px;line-height:3px;color:#335">60%</div>
<div class="t" style="transform:translate(549px,274.37px);font-size:1.6px;line-height:2px;color:#888">◉  —</div>
<div class="t" style="transform:translate(517.8px,278.94px);font-size:1.7px;line-height:3px;color:#555;letter-spacing:-0.07px">Paste the hex</div>
<div class="t" style="transform:translate(517.8px,281.64px);font-size:1.7px;line-height:3px;color:#555;letter-spacing:-0.09px">of your primary</div>
<div class="t" style="transform:translate(555.3px,281.62px);font-size:1.7px;line-height:3px;color:#555;letter-spacing:-0.07px">Adjust the opacity of the</div>
<div class="t" style="transform:translate(556.5px,284.31px);font-size:1.7px;line-height:3px;color:#555;letter-spacing:-0.11px">brush you are editing</div>
<div class="t" style="transform:translate(506.3px,290.33px);font-size:2.6px;line-height:4px;color:#333;letter-spacing:0.38px">Note</div>
<div class="t" style="transform:translate(506.3px,294.7px);font-size:2.65px;line-height:4px;color:#5f5b66;width:65px;overflow:hidden">readable. Container colors are used for elements that need</div>
<div class="t" style="transform:translate(506.3px,297.5px);font-size:2.65px;line-height:4px;color:#5f5b66;width:46px;overflow:hidden">less emphasis than the main color such as</div>
<div class="t" style="transform:translate(510px,312.83px);font-size:2.1px;line-height:3px;color:#666;letter-spacing:0.25px">Primary</div>
<div class="t" style="transform:translate(529.5px,313.48px);font-size:1.45px;line-height:2px;color:#999;letter-spacing:-0.12px">Medium: 60% Low: 38% Focused: 12% Hover: 8% Pressed: 12% Dragged: 16% Selected: 8%</div>
<div class="t" style="transform:translate(606px,97.72px);font-size:11px;line-height:14px;color:#1c1b1f;font-weight:bold;letter-spacing:0.08px">How to edit color style?</div>
<div class="t" style="transform:translate(606.2px,127.76px);font-size:5.65px;line-height:8px;color:#1c1b1f;letter-spacing:-0.1px">1. Primary</div>
<div class="t" style="transform:translate(606.2px,135.24px);font-size:2.65px;line-height:4px;color:#5f5b66;width:53.5px;overflow:hidden">tonal buttons chips and cards.  The primary color</div>
<div class="t" style="transform:translate(606.2px,138.04px);font-size:2.65px;line-height:4px;color:#5f5b66;width:31px;overflow:hidden">is displayed most frequently</div>
<div class="t" style="transform:translate(679.1px,132.63px);font-size:2.05px;line-height:3px;color:#fff">Primary Color</div>
<div class="t" style="transform:translate(679.1px,135.19px);font-size:2.05px;line-height:3px;color:#fff;font-weight:bold">#5946D2</div>
<div class="t" style="transform:translate(679.1px,145.13px);font-size:2.05px;line-height:3px;color:#5946d2">Primary Hover</div>
<div class="t" style="transform:translate(679.1px,147.69px);font-size:2.05px;line-height:3px;color:#5946d2;font-weight:bold">#5946D2 8%</div>
<div class="t" style="transform:translate(679.1px,153.39px);font-size:2.05px;line-height:3px;color:#5946d2">Primary Focused</div>
<div class="t" style="transform:translate(679.1px,155.95px);font-size:2.05px;line-height:3px;color:#5946d2;font-weight:bold">#5946D2 12%</div>
<div class="t" style="transform:translate(679.1px,161.65px);font-size:2.05px;line-height:3px;color:#5946d2">Primary Pressed</div>
<div class="t" style="transform:translate(679.1px,164.21px);font-size:2.05px;line-height:3px;color:#5946d2;font-weight:bold">#5946D2 12%</div>
<div class="t" style="transform:translate(679.1px,169.91px);font-size:2.05px;line-height:3px;color:#5946d2">Primary Dragged</div>
<div class="t" style="transform:translate(679.1px,172.47px);font-size:2.05px;line-height:3px;color:#5946d2;font-weight:bold">#5946D2 16%</div>
<div class="t" style="transform:translate(679.1px,178.17px);font-size:2.05px;line-height:3px;color:#5946d2">Primary Selected</div>
<div class="t" style="transform:translate(679.1px,180.73px);font-size:2.05px;line-height:3px;color:#5946d2;font-weight:bold">#5946D2 8%</div>
<div class="t" style="transform:translate(606.2px,158.07px);font-size:2.75px;line-height:4px;color:#3a393d;letter-spacing:-0.03px">1.1 Primary brushes</div>
<div class="t" style="transform:translate(606.2px,162.64px);font-size:2.65px;line-height:4px;color:#5f5b66;width:52px;overflow:hidden">across the screens and components of your application.</div>
<div class="t" style="transform:translate(606.2px,165.24px);font-size:2.65px;line-height:4px;color:#5f5b66;width:24.5px;overflow:hidden">Use the secondary color</div>
<div class="t" style="transform:translate(606.2px,195.06px);font-size:5.65px;line-height:8px;color:#1c1b1f;letter-spacing:-0.17px">2. On Primary</div>
<div class="t" style="transform:translate(606.2px,202.44px);font-size:2.65px;line-height:4px;color:#5f5b66;width:51.5px;overflow:hidden">to accent select parts of your interface such as</div>
<div class="t" style="transform:translate(606.2px,205.44px);font-size:2.65px;line-height:4px;color:#5f5b66;width:49px;overflow:hidden">floating action buttons and selection controls.</div>
<div class="t" style="transform:translate(606.2px,208.04px);font-size:2.65px;line-height:4px;color:#5f5b66;width:23px;overflow:hidden">Brushes are generated</div>
<div class="t" style="transform:translate(679.1px,199.38px);font-size:2.05px;line-height:3px;color:#5946d2">On Primary Color</div>
<div class="t" style="transform:translate(679.1px,201.94px);font-size:2.05px;line-height:3px;color:#5946d2;font-weight:bold">#FFFFFF</div>
<div class="t" style="transform:translate(608px,215.69px);font-size:2.25px;line-height:3px;color:#333;width:52px;overflow:hidden">automatically from the color styles with predefined opacity</div>
<div class="t" style="transform:translate(608px,218.39px);font-size:2.25px;line-height:3px;color:#333;width:51px;overflow:hidden">values so that every state stays consistent. To modify</div>
<div class="t" style="transform:translate(608px,221.09px);font-size:2.25px;line-height:3px;color:#333;width:27px;overflow:hidden">a color open the local styles panel</div>
<div class="t" style="transform:translate(606.2px,228.37px);font-size:2.75px;line-height:4px;color:#3a393d;letter-spacing:-0.18px">2.1 On Primary Medium &amp; Low brushes</div>
<div class="t" style="transform:translate(606.2px,233.24px);font-size:2.65px;line-height:4px;color:#5f5b66;width:57.5px;overflow:hidden">then edit the style and replace the hex value with the</div>
<div class="t" style="transform:translate(606.2px,235.94px);font-size:2.65px;line-height:4px;color:#5f5b66;width:56.5px;overflow:hidden">one from your own palette. Medium and low emphasis</div>
<div class="t" style="transform:translate(606.2px,238.64px);font-size:2.65px;line-height:4px;color:#5f5b66;width:30px;overflow:hidden">variants are applied on text</div>
<div class="t" style="transform:translate(679.1px,229.53px);font-size:2.05px;line-height:3px;color:#5946d2">On Primary Medium</div>
<div class="t" style="transform:translate(679.1px,232.09px);font-size:2.05px;line-height:3px;color:#5946d2;font-weight:bold">#FFFFFF 74%</div>
<div class="t" style="transform:translate(679.1px,237.33px);font-size:2.05px;line-height:3px;color:#e8e4fb">On Primary Low</div>
<div class="t" style="transform:translate(679.1px,239.89px);font-size:2.05px;line-height:3px;color:#e8e4fb;font-weight:bold">#FFFFFF 38%</div>
<div class="t" style="transform:translate(679.1px,247.46px);font-size:2.05px;line-height:3px;color:#fff">On Primary Focused</div>
<div class="t" style="transform:translate(679.1px,250.02px);font-size:2.05px;line-height:3px;color:#fff;font-weight:bold">#FFFFFF 12%</div>
<div class="t" style="transform:translate(679.1px,255.38px);font-size:2.05px;line-height:3px;color:#fff">On Primary Hover</div>
<div class="t" style="transform:translate(679.1px,257.94px);font-size:2.05px;line-height:3px;color:#fff;font-weight:bold">#FFFFFF 8%</div>
<div class="t" style="transform:translate(679.1px,263.3px);font-size:2.05px;line-height:3px;color:#fff">On Primary Pressed</div>
<div class="t" style="transform:translate(679.1px,265.86px);font-size:2.05px;line-height:3px;color:#fff;font-weight:bold">#FFFFFF 12%</div>
<div class="t" style="transform:translate(679.1px,271.22px);font-size:2.05px;line-height:3px;color:#fff">On Primary Dragged</div>
<div class="t" style="transform:translate(679.1px,273.78px);font-size:2.05px;line-height:3px;color:#fff;font-weight:bold">#FFFFFF 16%</div>
<div class="t" style="transform:translate(679.1px,279.14px);font-size:2.05px;line-height:3px;color:#fff">On Primary Selected</div>
<div class="t" style="transform:translate(679.1px,281.7px);font-size:2.05px;line-height:3px;color:#fff;font-weight:bold">#FFFFFF 8%</div>
<div class="t" style="transform:translate(606.2px,254.67px);font-size:2.75px;line-height:4px;color:#3a393d;letter-spacing:-0.05px">2.2 On Primary brushes</div>
<div class="t" style="transform:translate(606.2px,259.44px);font-size:2.65px;line-height:4px;color:#5f5b66;width:53px;overflow:hidden">and icons that appear on top of this color to keep</div>
<div class="t" style="transform:translate(606.2px,262.14px);font-size:2.65px;line-height:4px;color:#5f5b66;width:25px;overflow:hidden">the content readable. Container</div>
<div class="t" style="transform:translate(608px,269.59px);font-size:2.25px;line-height:3px;color:#333;width:41px;overflow:hidden">colors are used for elements that need less</div>
<div class="t" style="transform:translate(608px,272.29px);font-size:2.25px;line-height:3px;color:#333;width:17px;overflow:hidden">emphasis than the</div>
<div class="t" style="transform:translate(606.2px,295.76px);font-size:5.65px;line-height:8px;color:#1c1b1f;letter-spacing:-0.12px">3. Primary Container</div>
<div class="t" style="transform:translate(606.2px,303.44px);font-size:2.65px;line-height:4px;color:#5f5b66;width:55px;overflow:hidden">main color such as tonal buttons chips and cards.</div>
<div class="t" style="transform:translate(606.2px,306.14px);font-size:2.65px;line-height:4px;color:#5f5b66;width:21px;overflow:hidden">The primary color is</div>
<div class="t" style="transform:translate(679.1px,301.18px);font-size:2.05px;line-height:3px;color:#5946d2">Primary Container Color</div>
<div class="t" style="transform:translate(679.1px,303.74px);font-size:2.05px;line-height:3px;color:#5946d2;font-weight:bold">#E5DEFF</div>
<div class="t" style="transform:translate(606.2px,320.36px);font-size:5.65px;line-height:8px;color:#1c1b1f;letter-spacing:-0.14px">4. On Primary Container</div>
<div class="t" style="transform:translate(606.2px,327.84px);font-size:2.65px;line-height:4px;color:#5f5b66;width:53px;overflow:hidden">displayed most frequently across the screens and</div>
<div class="t" style="transform:translate(606.2px,330.54px);font-size:2.65px;line-height:4px;color:#5f5b66;width:33px;overflow:hidden">components of your application.</div>
<div class="t" style="transform:translate(679.1px,325.63px);font-size:2.05px;line-height:3px;color:#fff">On Primary Container Color</div>
<div class="t" style="transform:translate(679.1px,328.19px);font-size:2.05px;line-height:3px;color:#fff;font-weight:bold">#170065</div>
<div class="t" style="transform:translate(771.5px,127.66px);font-size:5.65px;line-height:8px;color:#1c1b1f;letter-spacing:-0.14px">5. Secondary</div>
<div class="t" style="transform:translate(771.5px,134.74px);font-size:2.65px;line-height:4px;color:#5f5b66;width:56px;overflow:hidden">Use the secondary color to accent select parts of</div>
<div class="t" style="transform:translate(771.5px,137.34px);font-size:2.65px;line-height:4px;color:#5f5b66;width:56.5px;overflow:hidden">your interface such as floating action buttons and</div>
<div class="t" style="transform:translate(771.5px,139.94px);font-size:2.65px;line-height:4px;color:#5f5b66;width:33px;overflow:hidden">selection controls. Brushes are</div>
<div class="t" style="transform:translate(771.5px,145.84px);font-size:2.65px;line-height:4px;color:#5f5b66;width:57px;overflow:hidden">generated automatically from the color styles with</div>
<div class="t" style="transform:translate(771.5px,148.44px);font-size:2.65px;line-height:4px;color:#5f5b66;width:54px;overflow:hidden">predefined opacity values so that every state stays</div>
<div class="t" style="transform:translate(771.5px,151.04px);font-size:2.65px;line-height:4px;color:#5f5b66;width:7px;overflow:hidden">consistent.</div>
<div class="t" style="transform:translate(844.4px,131.88px);font-size:2.05px;line-height:3px;color:#fff">Secondary Color</div>
<div class="t" style="transform:translate(844.4px,134.44px);font-size:2.05px;line-height:3px;color:#fff;font-weight:bold">#006C4A</div>
<div class="t" style="transform:translate(844.4px,148.46px);font-size:2.05px;line-height:3px;color:#006c4a">Secondary Hover</div>
<div class="t" style="transform:translate(844.4px,151.02px);font-size:2.05px;line-height:3px;color:#006c4a;font-weight:bold">#006C4A 8%</div>
<div class="t" style="transform:translate(844.4px,156.58px);font-size:2.05px;line-height:3px;color:#006c4a">Secondary Focused</div>
<div class="t" style="transform:translate(844.4px,159.14px);font-size:2.05px;line-height:3px;color:#006c4a;font-weight:bold">#006C4A 12%</div>
<div class="t" style="transform:translate(844.4px,164.7px);font-size:2.05px;line-height:3px;color:#006c4a">Secondary Pressed</div>
<div class="t" style="transform:translate(844.4px,167.26px);font-size:2.05px;line-height:3px;color:#006c4a;font-weight:bold">#006C4A 12%</div>
<div class="t" style="transform:translate(844.4px,172.82px);font-size:2.05px;line-height:3px;color:#006c4a">Secondary Dragged</div>
<div class="t" style="transform:translate(844.4px,175.38px);font-size:2.05px;line-height:3px;color:#006c4a;font-weight:bold">#006C4A 16%</div>
<div class="t" style="transform:translate(844.4px,180.94px);font-size:2.05px;line-height:3px;color:#006c4a">Secondary Selected</div>
<div class="t" style="transform:translate(844.4px,183.5px);font-size:2.05px;line-height:3px;color:#006c4a;font-weight:bold">#006C4A 8%</div>
<div class="t" style="transform:translate(771.5px,160.97px);font-size:2.75px;line-height:4px;color:#3a393d;letter-spacing:-0.06px">5.1 Secondary brushes</div>
<div class="t" style="transform:translate(771.5px,165.44px);font-size:2.65px;line-height:4px;color:#5f5b66;width:52px;overflow:hidden">To modify a color open the local styles panel then</div>
<div class="t" style="transform:translate(771.5px,168.14px);font-size:2.65px;line-height:4px;color:#5f5b66;width:25px;overflow:hidden">edit the style and replace</div>
<div class="t" style="transform:translate(771.5px,196.16px);font-size:5.65px;line-height:8px;color:#1c1b1f;letter-spacing:-0.19px">6. On Secondary</div>
<div class="t" style="transform:translate(771.5px,203.74px);font-size:2.65px;line-height:4px;color:#5f5b66;width:54px;overflow:hidden">the hex value with the one from your own palette.</div>
<div class="t" style="transform:translate(771.5px,206.44px);font-size:2.65px;line-height:4px;color:#5f5b66;width:56.5px;overflow:hidden">Medium and low emphasis variants are applied on</div>
<div class="t" style="transform:translate(771.5px,209.14px);font-size:2.65px;line-height:4px;color:#5f5b66;width:22px;overflow:hidden">text and icons that appear</div>
<div class="t" style="transform:translate(844.4px,200.03px);font-size:2.05px;line-height:3px;color:#006c4a">On Secondary Color</div>
<div class="t" style="transform:translate(844.4px,202.59px);font-size:2.05px;line-height:3px;color:#006c4a;font-weight:bold">#FFFFFF</div>
<div class="t" style="transform:translate(773.3px,217.19px);font-size:2.25px;line-height:3px;color:#333;width:49px;overflow:hidden">on top of this color to keep the content readable. Container</div>
<div class="t" style="transform:translate(773.3px,219.89px);font-size:2.25px;line-height:3px;color:#333;width:52px;overflow:hidden">colors are used for elements that need less emphasis</div>
<div class="t" style="transform:translate(773.3px,222.59px);font-size:2.25px;line-height:3px;color:#333;width:36px;overflow:hidden">than the main color such as tonal buttons</div>
<div class="t" style="transform:translate(771.5px,228.27px);font-size:2.75px;line-height:4px;color:#3a393d;letter-spacing:-0.18px">6.1 On Secondary Medium &amp; Low brushes</div>
<div class="t" style="transform:translate(771.5px,233.14px);font-size:2.65px;line-height:4px;color:#5f5b66;width:52px;overflow:hidden">chips and cards.  The primary color is displayed</div>
<div class="t" style="transform:translate(771.5px,235.84px);font-size:2.65px;line-height:4px;color:#5f5b66;width:56px;overflow:hidden">most frequently across the screens and components</div>
<div class="t" style="transform:translate(771.5px,238.54px);font-size:2.65px;line-height:4px;color:#5f5b66;width:40px;overflow:hidden">of your application. Use the secondary</div>
<div class="t" style="transform:translate(844.4px,230.53px);font-size:2.05px;line-height:3px;color:#006c4a">On Secondary Medium</div>
<div class="t" style="transform:translate(844.4px,233.09px);font-size:2.05px;line-height:3px;color:#006c4a;font-weight:bold">#FFFFFF 74%</div>
<div class="t" style="transform:translate(844.4px,238.43px);font-size:2.05px;line-height:3px;color:#e4f1ec">On Secondary Low</div>
<div class="t" style="transform:translate(844.4px,240.99px);font-size:2.05px;line-height:3px;color:#e4f1ec;font-weight:bold">#FFFFFF 38%</div>
<div class="t" style="transform:translate(844.4px,248.27px);font-size:2.05px;line-height:3px;color:#fff">On Secondary Focused</div>
<div class="t" style="transform:translate(844.4px,250.83px);font-size:2.05px;line-height:3px;color:#fff;font-weight:bold">#FFFFFF 12%</div>
<div class="t" style="transform:translate(844.4px,256.21px);font-size:2.05px;line-height:3px;color:#fff">On Secondary Hover</div>
<div class="t" style="transform:translate(844.4px,258.77px);font-size:2.05px;line-height:3px;color:#fff;font-weight:bold">#FFFFFF 8%</div>
<div class="t" style="transform:translate(844.4px,264.15px);font-size:2.05px;line-height:3px;color:#fff">On Secondary Pressed</div>
<div class="t" style="transform:translate(844.4px,266.71px);font-size:2.05px;line-height:3px;color:#fff;font-weight:bold">#FFFFFF 12%</div>
<div class="t" style="transform:translate(844.4px,272.09px);font-size:2.05px;line-height:3px;color:#fff">On Secondary Dragged</div>
<div class="t" style="transform:translate(844.4px,274.65px);font-size:2.05px;line-height:3px;color:#fff;font-weight:bold">#FFFFFF 16%</div>
<div class="t" style="transform:translate(844.4px,280.03px);font-size:2.05px;line-height:3px;color:#fff">On Secondary Selected</div>
<div class="t" style="transform:translate(844.4px,282.59px);font-size:2.05px;line-height:3px;color:#fff;font-weight:bold">#FFFFFF 8%</div>
<div class="t" style="transform:translate(771.5px,255.87px);font-size:2.75px;line-height:4px;color:#3a393d;letter-spacing:-0.05px">6.2 On Secondary brushes</div>
<div class="t" style="transform:translate(771.5px,260.54px);font-size:2.65px;line-height:4px;color:#5f5b66;width:56px;overflow:hidden">color to accent select parts of your interface such</div>
<div class="t" style="transform:translate(771.5px,263.24px);font-size:2.65px;line-height:4px;color:#5f5b66;width:24px;overflow:hidden">as floating action buttons</div>
<div class="t" style="transform:translate(773.3px,270.49px);font-size:2.25px;line-height:3px;color:#333;width:44px;overflow:hidden">and selection controls. Brushes are generated</div>
<div class="t" style="transform:translate(773.3px,273.19px);font-size:2.25px;line-height:3px;color:#333;width:16px;overflow:hidden">automatically from</div>
<div class="t" style="transform:translate(771.5px,295.66px);font-size:5.65px;line-height:8px;color:#1c1b1f;letter-spacing:-0.12px">7. Secondary container</div>
<div class="t" style="transform:translate(771.5px,303.34px);font-size:2.65px;line-height:4px;color:#5f5b66;width:56px;overflow:hidden">the color styles with predefined opacity values so</div>
<div class="t" style="transform:translate(771.5px,306.04px);font-size:2.65px;line-height:4px;color:#5f5b66;width:22px;overflow:hidden">that every state stays</div>
<div class="t" style="transform:translate(844.4px,301.08px);font-size:2.05px;line-height:3px;color:#1c1b1f">Secondary Container Color</div>
<div class="t" style="transform:translate(844.4px,303.64px);font-size:2.05px;line-height:3px;color:#1c1b1f;font-weight:bold">#E5DEFF</div>
<div class="t" style="transform:translate(771.5px,320.26px);font-size:5.65px;line-height:8px;color:#1c1b1f;letter-spacing:-0.18px">8. On Secondary Container</div>
<div class="t" style="transform:translate(771.5px,327.74px);font-size:2.65px;line-height:4px;color:#5f5b66;width:54.5px;overflow:hidden">consistent. To modify a color open the local styles</div>
<div class="t" style="transform:translate(771.5px,330.44px);font-size:2.65px;line-height:4px;color:#5f5b66;width:33px;overflow:hidden">panel then edit the style and replace</div>
<div class="t" style="transform:translate(844.4px,325.53px);font-size:2.05px;line-height:3px;color:#fff">On Secondary Container Color</div>
<div class="t" style="transform:translate(844.4px,328.09px);font-size:2.05px;line-height:3px;color:#fff;font-weight:bold">#1B1A2C</div>
<div class="t" style="transform:translate(936.8px,127.26px);font-size:5.65px;line-height:8px;color:#1c1b1f;letter-spacing:-0.05px">9. Tertiary</div>
<div class="t" style="transform:translate(936.8px,134.94px);font-size:2.65px;line-height:4px;color:#5f5b66;width:54px;overflow:hidden">the hex value with the one from your own palette.</div>
<div class="t" style="transform:translate(936.8px,137.64px);font-size:2.65px;line-height:4px;color:#5f5b66;width:38px;overflow:hidden">Medium and low emphasis variants</div>
<div class="t" style="transform:translate(1009.7px,131.78px);font-size:2.05px;line-height:3px;color:#fff">Tertiary Color</div>
<div class="t" style="transform:translate(1009.7px,134.34px);font-size:2.05px;line-height:3px;color:#fff;font-weight:bold">#0061A4</div>
<div class="t" style="transform:translate(1009.7px,148.36px);font-size:2.05px;line-height:3px;color:#0061a4">Tertiary Hover</div>
<div class="t" style="transform:translate(1009.7px,150.92px);font-size:2.05px;line-height:3px;color:#0061a4;font-weight:bold">#0061A4 8%</div>
<div class="t" style="transform:translate(1009.7px,156.48px);font-size:2.05px;line-height:3px;color:#0061a4">Tertiary Focused</div>
<div class="t" style="transform:translate(1009.7px,159.04px);font-size:2.05px;line-height:3px;color:#0061a4;font-weight:bold">#0061A4 12%</div>
<div class="t" style="transform:translate(1009.7px,164.6px);font-size:2.05px;line-height:3px;color:#0061a4">Tertiary Pressed</div>
<div class="t" style="transform:translate(1009.7px,167.16px);font-size:2.05px;line-height:3px;color:#0061a4;font-weight:bold">#0061A4 12%</div>
<div class="t" style="transform:translate(1009.7px,172.72px);font-size:2.05px;line-height:3px;color:#0061a4">Tertiary Dragged</div>
<div class="t" style="transform:translate(1009.7px,175.28px);font-size:2.05px;line-height:3px;color:#0061a4;font-weight:bold">#0061A4 16%</div>
<div class="t" style="transform:translate(1009.7px,180.84px);font-size:2.05px;line-height:3px;color:#0061a4">Tertiary Selected</div>
<div class="t" style="transform:translate(1009.7px,183.4px);font-size:2.05px;line-height:3px;color:#0061a4;font-weight:bold">#0061A4 8%</div>
<div class="t" style="transform:translate(936.8px,162.47px);font-size:2.75px;line-height:4px;color:#3a393d;letter-spacing:-0.01px">9.1 Tertiary brushes</div>
<div class="t" style="transform:translate(936.8px,166.64px);font-size:2.65px;line-height:4px;color:#5f5b66;width:55.5px;overflow:hidden">are applied on text and icons that appear on top of</div>
<div class="t" style="transform:translate(936.8px,196.06px);font-size:5.65px;line-height:8px;color:#1c1b1f;letter-spacing:-0.1px">10. On Tertiary</div>
<div class="t" style="transform:translate(936.8px,203.64px);font-size:2.65px;line-height:4px;color:#5f5b66;width:51px;overflow:hidden">this color to keep the content readable. Container</div>
<div class="t" style="transform:translate(936.8px,206.34px);font-size:2.65px;line-height:4px;color:#5f5b66;width:53.5px;overflow:hidden">colors are used for elements that need less emphasis</div>
<div class="t" style="transform:translate(936.8px,209.04px);font-size:2.65px;line-height:4px;color:#5f5b66;width:22px;overflow:hidden">than the main color such</div>
<div class="t" style="transform:translate(1009.7px,199.93px);font-size:2.05px;line-height:3px;color:#0061a4">On Tertiary Color</div>
<div class="t" style="transform:translate(1009.7px,202.49px);font-size:2.05px;line-height:3px;color:#0061a4;font-weight:bold">#FFFFFF</div>
<div class="t" style="transform:translate(938.6px,217.09px);font-size:2.25px;line-height:3px;color:#333;width:52px;overflow:hidden">as tonal buttons chips and cards.  The primary color is</div>
<div class="t" style="transform:translate(938.6px,219.79px);font-size:2.25px;line-height:3px;color:#333;width:51.5px;overflow:hidden">displayed most frequently across the screens and components</div>
<div class="t" style="transform:translate(938.6px,222.49px);font-size:2.25px;line-height:3px;color:#333;width:29px;overflow:hidden">of your application. Use the secondary</div>
<div class="t" style="transform:translate(936.8px,228.17px);font-size:2.75px;line-height:4px;color:#3a393d;letter-spacing:-0.15px">10.1 On Tertiary Medium &amp; Low brushes</div>
<div class="t" style="transform:translate(936.8px,233.04px);font-size:2.65px;line-height:4px;color:#5f5b66;width:55.5px;overflow:hidden">color to accent select parts of your interface such</div>
<div class="t" style="transform:translate(936.8px,235.74px);font-size:2.65px;line-height:4px;color:#5f5b66;width:57.5px;overflow:hidden">as floating action buttons and selection controls. Brushes</div>
<div class="t" style="transform:translate(936.8px,238.44px);font-size:2.65px;line-height:4px;color:#5f5b66;width:23.5px;overflow:hidden">are generated automatically</div>
<div class="t" style="transform:translate(1009.7px,230.43px);font-size:2.05px;line-height:3px;color:#e9f1f8">On Tertiary Medium</div>
<div class="t" style="transform:translate(1009.7px,232.99px);font-size:2.05px;line-height:3px;color:#e9f1f8;font-weight:bold">#FFFFFF 74%</div>
<div class="t" style="transform:translate(1009.7px,238.33px);font-size:2.05px;line-height:3px;color:#e4eef6">On Tertiary Low</div>
<div class="t" style="transform:translate(1009.7px,240.89px);font-size:2.05px;line-height:3px;color:#e4eef6;font-weight:bold">#FFFFFF 38%</div>
<div class="t" style="transform:translate(1009.7px,248.17px);font-size:2.05px;line-height:3px;color:#fff">On Tertiary Focused</div>
<div class="t" style="transform:translate(1009.7px,250.73px);font-size:2.05px;line-height:3px;color:#fff;font-weight:bold">#FFFFFF 12%</div>
<div class="t" style="transform:translate(1009.7px,256.11px);font-size:2.05px;line-height:3px;color:#fff">On Tertiary Hover</div>
<div class="t" style="transform:translate(1009.7px,258.67px);font-size:2.05px;line-height:3px;color:#fff;font-weight:bold">#FFFFFF 8%</div>
<div class="t" style="transform:translate(1009.7px,264.05px);font-size:2.05px;line-height:3px;color:#fff">On Tertiary Pressed</div>
<div class="t" style="transform:translate(1009.7px,266.61px);font-size:2.05px;line-height:3px;color:#fff;font-weight:bold">#FFFFFF 12%</div>
<div class="t" style="transform:translate(1009.7px,271.99px);font-size:2.05px;line-height:3px;color:#fff">On Tertiary Dragged</div>
<div class="t" style="transform:translate(1009.7px,274.55px);font-size:2.05px;line-height:3px;color:#fff;font-weight:bold">#FFFFFF 16%</div>
<div class="t" style="transform:translate(1009.7px,279.93px);font-size:2.05px;line-height:3px;color:#fff">On Tertiary Selected</div>
<div class="t" style="transform:translate(1009.7px,282.49px);font-size:2.05px;line-height:3px;color:#fff;font-weight:bold">#FFFFFF 8%</div>
<div class="t" style="transform:translate(936.8px,255.77px);font-size:2.75px;line-height:4px;color:#3a393d;letter-spacing:-0.02px">10.2 On Tertiary brushes</div>
<div class="t" style="transform:translate(936.8px,260.44px);font-size:2.65px;line-height:4px;color:#5f5b66;width:54px;overflow:hidden">from the color styles with predefined opacity values</div>
<div class="t" style="transform:translate(936.8px,263.14px);font-size:2.65px;line-height:4px;color:#5f5b66;width:26.5px;overflow:hidden">so that every state stays</div>
<div class="t" style="transform:translate(938.6px,270.39px);font-size:2.25px;line-height:3px;color:#333;width:45px;overflow:hidden">consistent. To modify a color open the local styles</div>
<div class="t" style="transform:translate(938.6px,273.09px);font-size:2.25px;line-height:3px;color:#333;width:15px;overflow:hidden">panel then edit the</div>
<div class="t" style="transform:translate(936.8px,295.56px);font-size:5.65px;line-height:8px;color:#1c1b1f;letter-spacing:-0.06px">11. Tertiary container</div>
<div class="t" style="transform:translate(936.8px,303.24px);font-size:2.65px;line-height:4px;color:#5f5b66;width:55.5px;overflow:hidden">style and replace the hex value with the one from</div>
<div class="t" style="transform:translate(936.8px,305.94px);font-size:2.65px;line-height:4px;color:#5f5b66;width:21px;overflow:hidden">your own palette. Medium</div>
<div class="t" style="transform:translate(1009.7px,300.98px);font-size:2.05px;line-height:3px;color:#1c1b1f">Tertiary Container Color</div>
<div class="t" style="transform:translate(1009.7px,303.54px);font-size:2.05px;line-height:3px;color:#1c1b1f;font-weight:bold">#D1E4FF</div>
<div class="t" style="transform:translate(936.8px,320.16px);font-size:5.65px;line-height:8px;color:#1c1b1f;letter-spacing:-0.12px">12. On Tertiary Container</div>
<div class="t" style="transform:translate(936.8px,327.64px);font-size:2.65px;line-height:4px;color:#5f5b66;width:52.5px;overflow:hidden">and low emphasis variants are applied on text</div>
<div class="t" style="transform:translate(936.8px,330.34px);font-size:2.65px;line-height:4px;color:#5f5b66;width:33.5px;overflow:hidden">and icons that appear on top of</div>
<div class="t" style="transform:translate(1009.7px,325.43px);font-size:2.05px;line-height:3px;color:#fff">On Tertiary Container Color</div>
<div class="t" style="transform:translate(1009.7px,327.99px);font-size:2.05px;line-height:3px;color:#fff;font-weight:bold">#001D36</div>
<div class="t" style="transform:translate(1102.1px,127.76px);font-size:5.65px;line-height:8px;color:#1c1b1f;letter-spacing:-0.08px">13. Background</div>
<div class="t" style="transform:translate(1102.1px,135.24px);font-size:2.65px;line-height:4px;color:#5f5b66;width:42px;overflow:hidden">this color to keep the content readable.</div>
<div class="t" style="transform:translate(1175px,131.68px);font-size:2.05px;line-height:3px;color:#1c1b1f">Background Color</div>
<div class="t" style="transform:translate(1175px,134.24px);font-size:2.05px;line-height:3px;color:#1c1b1f;font-weight:bold">#FCFBFF</div>
<div class="t" style="transform:translate(1102.1px,149.06px);font-size:5.65px;line-height:8px;color:#1c1b1f;letter-spacing:-0.16px">14. On Background</div>
<div class="t" style="transform:translate(1102.1px,156.34px);font-size:2.65px;line-height:4px;color:#5f5b66;width:53px;overflow:hidden">Container colors are used for elements that need</div>
<div class="t" style="transform:translate(1102.1px,159.04px);font-size:2.65px;line-height:4px;color:#5f5b66;width:55.5px;overflow:hidden">less emphasis than the main color such as tonal buttons</div>
<div class="t" style="transform:translate(1102.1px,161.74px);font-size:2.65px;line-height:4px;color:#5f5b66;width:4.5px;overflow:hidden">chips</div>
<div class="t" style="transform:translate(1175px,153.38px);font-size:2.05px;line-height:3px;color:#fff">On Background Color</div>
<div class="t" style="transform:translate(1175px,155.94px);font-size:2.05px;line-height:3px;color:#fff;font-weight:bold">#1C1B1F</div>
<div class="t" style="transform:translate(1103.9px,168.8px);font-size:2.25px;line-height:3px;color:#333;width:53px;overflow:hidden">and cards.  The primary color is displayed most frequently</div>
<div class="t" style="transform:translate(1103.9px,171.5px);font-size:2.25px;line-height:3px;color:#333;width:53.5px;overflow:hidden">across the screens and components of your application.</div>
<div class="t" style="transform:translate(1103.9px,174.2px);font-size:2.25px;line-height:3px;color:#333;width:26px;overflow:hidden">Use the secondary color to accent</div>
<div class="t" style="transform:translate(1102.1px,181.37px);font-size:2.75px;line-height:4px;color:#3a393d;letter-spacing:-0.16px">14.1 On Background Medium &amp; Low brushes</div>
<div class="t" style="transform:translate(1102.1px,186.14px);font-size:2.65px;line-height:4px;color:#5f5b66;width:56.5px;overflow:hidden">select parts of your interface such as floating action</div>
<div class="t" style="transform:translate(1102.1px,188.84px);font-size:2.65px;line-height:4px;color:#5f5b66;width:57px;overflow:hidden">buttons and selection controls. Brushes are generated</div>
<div class="t" style="transform:translate(1102.1px,191.54px);font-size:2.65px;line-height:4px;color:#5f5b66;width:29.5px;overflow:hidden">automatically from the color</div>
<div class="t" style="transform:translate(1175px,182.08px);font-size:2.05px;line-height:3px;color:#fff">On Background Medium</div>
<div class="t" style="transform:translate(1175px,184.64px);font-size:2.05px;line-height:3px;color:#fff;font-weight:bold">#1C1B1F 60%</div>
<div class="t" style="transform:translate(1175px,190.08px);font-size:2.05px;line-height:3px;color:#f4f4f6">On Background Low</div>
<div class="t" style="transform:translate(1175px,192.64px);font-size:2.05px;line-height:3px;color:#f4f4f6;font-weight:bold">#1C1B1F 38%</div>
<div class="t" style="transform:translate(1102.1px,218.16px);font-size:5.65px;line-height:8px;color:#1c1b1f;letter-spacing:-0.13px">15. Surface</div>
<div class="t" style="transform:translate(1102.1px,225.54px);font-size:2.65px;line-height:4px;color:#5f5b66;width:57px;overflow:hidden">styles with predefined opacity values so that every</div>
<div class="t" style="transform:translate(1102.1px,228.24px);font-size:2.65px;line-height:4px;color:#5f5b66;width:5px;overflow:hidden">state stays</div>
<div class="t" style="transform:translate(1175px,222.03px);font-size:2.05px;line-height:3px;color:#1c1b1f">Surface Color</div>
<div class="t" style="transform:translate(1175px,224.59px);font-size:2.05px;line-height:3px;color:#1c1b1f;font-weight:bold">#FFFFFF</div>
<div class="t" style="transform:translate(1102.1px,242.66px);font-size:5.65px;line-height:8px;color:#1c1b1f;letter-spacing:-0.14px">16. On Surface</div>
<div class="t" style="transform:translate(1102.1px,249.94px);font-size:2.65px;line-height:4px;color:#5f5b66;width:57px;overflow:hidden">consistent. To modify a color open the local styles</div>
<div class="t" style="transform:translate(1102.1px,252.64px);font-size:2.65px;line-height:4px;color:#5f5b66;width:56.5px;overflow:hidden">panel then edit the style and replace the hex value</div>
<div class="t" style="transform:translate(1102.1px,255.34px);font-size:2.65px;line-height:4px;color:#5f5b66;width:5px;overflow:hidden">with the</div>
<div class="t" style="transform:translate(1175px,249.18px);font-size:2.05px;line-height:3px;color:#fff">On Surface Color</div>
<div class="t" style="transform:translate(1175px,251.74px);font-size:2.05px;line-height:3px;color:#fff;font-weight:bold">#1C1B1F</div>
<div class="t" style="transform:translate(1102.1px,271.77px);font-size:2.75px;line-height:4px;color:#3a393d;letter-spacing:-0.17px">16.1 On Surface Medium &amp; Low brushes</div>
<div class="t" style="transform:translate(1102.1px,276.54px);font-size:2.65px;line-height:4px;color:#5f5b66;width:57px;overflow:hidden">one from your own palette. Medium and low emphasis</div>
<div class="t" style="transform:translate(1102.1px,279.24px);font-size:2.65px;line-height:4px;color:#5f5b66;width:56.5px;overflow:hidden">variants are applied on text and icons that appear</div>
<div class="t" style="transform:translate(1102.1px,281.94px);font-size:2.65px;line-height:4px;color:#5f5b66;width:29px;overflow:hidden">on top of this color to keep</div>
<div class="t" style="transform:translate(1175px,272.53px);font-size:2.05px;line-height:3px;color:#fff">On Surface Medium</div>
<div class="t" style="transform:translate(1175px,275.09px);font-size:2.05px;line-height:3px;color:#fff;font-weight:bold">#1C1B1F 60%</div>
<div class="t" style="transform:translate(1175px,280.43px);font-size:2.05px;line-height:3px;color:#fff">On Surface Low</div>
<div class="t" style="transform:translate(1175px,282.99px);font-size:2.05px;line-height:3px;color:#fff;font-weight:bold">#1C1B1F 38%</div>
<div class="t" style="transform:translate(1175px,290.9px);font-size:2.05px;line-height:3px;color:#1c1b1f">On Surface Focused</div>
<div class="t" style="transform:translate(1175px,293.46px);font-size:2.05px;line-height:3px;color:#1c1b1f;font-weight:bold">#1C1B1F 12%</div>
<div class="t" style="transform:translate(1175px,298.7px);font-size:2.05px;line-height:3px;color:#1c1b1f">On Surface Hover</div>
<div class="t" style="transform:translate(1175px,301.26px);font-size:2.05px;line-height:3px;color:#1c1b1f;font-weight:bold">#1C1B1F 8%</div>
<div class="t" style="transform:translate(1175px,306.5px);font-size:2.05px;line-height:3px;color:#1c1b1f">On Surface Pressed</div>
<div class="t" style="transform:translate(1175px,309.06px);font-size:2.05px;line-height:3px;color:#1c1b1f;font-weight:bold">#1C1B1F 12%</div>
<div class="t" style="transform:translate(1175px,314.3px);font-size:2.05px;line-height:3px;color:#1c1b1f">On Surface Dragged</div>
<div class="t" style="transform:translate(1175px,316.86px);font-size:2.05px;line-height:3px;color:#1c1b1f;font-weight:bold">#1C1B1F 16%</div>
<div class="t" style="transform:translate(1175px,322.1px);font-size:2.05px;line-height:3px;color:#1c1b1f">On Surface Selected</div>
<div class="t" style="transform:translate(1175px,324.66px);font-size:2.05px;line-height:3px;color:#1c1b1f;font-weight:bold">#1C1B1F 8%</div>
<div class="t" style="transform:translate(1102.1px,298.37px);font-size:2.75px;line-height:4px;color:#3a393d;letter-spacing:0.17px">16.2 Surface brushes</div>
<div class="t" style="transform:translate(1102.1px,303.14px);font-size:2.65px;line-height:4px;color:#5f5b66;width:55px;overflow:hidden">the content readable. Container colors are used for</div>
<div class="t" style="transform:translate(1102.1px,305.84px);font-size:2.65px;line-height:4px;color:#5f5b66;width:26px;overflow:hidden">elements that need less</div>
<div class="t" style="transform:translate(1103.9px,312.5px);font-size:2.25px;line-height:3px;color:#333;width:44px;overflow:hidden">emphasis than the main color such as tonal buttons</div>
<div class="t" style="transform:translate(1103.9px,315.2px);font-size:2.25px;line-height:3px;color:#333;width:14px;overflow:hidden">chips and cards.</div>
<div class="t" style="transform:translate(1267.4px,127.36px);font-size:5.65px;line-height:8px;color:#1c1b1f;letter-spacing:-0.09px">17. Surface Variant</div>
<div class="t" style="transform:translate(1267.4px,134.85px);font-size:2.65px;line-height:4px;color:#5f5b66;width:57px;overflow:hidden">The primary color is displayed most frequently across</div>
<div class="t" style="transform:translate(1267.4px,137.55px);font-size:2.65px;line-height:4px;color:#5f5b66;width:6.5px;overflow:hidden">the screens</div>
<div class="t" style="transform:translate(1340.3px,132.23px);font-size:2.05px;line-height:3px;color:#1c1b1f">Surface Variant Color</div>
<div class="t" style="transform:translate(1340.3px,134.79px);font-size:2.05px;line-height:3px;color:#1c1b1f;font-weight:bold">#F3EFF4</div>
<div class="t" style="transform:translate(1267.4px,151.76px);font-size:5.65px;line-height:8px;color:#1c1b1f;letter-spacing:-0.11px">18. On Surface Variant</div>
<div class="t" style="transform:translate(1267.4px,159.25px);font-size:2.65px;line-height:4px;color:#5f5b66;width:57.5px;overflow:hidden">and components of your application. Use the secondary</div>
<div class="t" style="transform:translate(1267.4px,161.95px);font-size:2.65px;line-height:4px;color:#5f5b66;width:6.5px;overflow:hidden">color to</div>
<div class="t" style="transform:translate(1340.3px,157.08px);font-size:2.05px;line-height:3px;color:#fff">On Surface Variant Color</div>
<div class="t" style="transform:translate(1340.3px,159.64px);font-size:2.05px;line-height:3px;color:#fff;font-weight:bold">#89818F</div>
<div class="t" style="transform:translate(1267.4px,176.26px);font-size:5.65px;line-height:8px;color:#1c1b1f;letter-spacing:-0.14px">19. Outline</div>
<div class="t" style="transform:translate(1267.4px,183.65px);font-size:2.65px;line-height:4px;color:#5f5b66;width:50px;overflow:hidden">accent select parts of your interface such as</div>
<div class="t" style="transform:translate(1267.4px,186.35px);font-size:2.65px;line-height:4px;color:#5f5b66;width:54.5px;overflow:hidden">floating action buttons and selection controls. Brushes</div>
<div class="t" style="transform:translate(1267.4px,189.05px);font-size:2.65px;line-height:4px;color:#5f5b66;width:6px;overflow:hidden">are generated</div>
<div class="t" style="transform:translate(1340.3px,180.73px);font-size:2.05px;line-height:3px;color:#fff">Outline Color</div>
<div class="t" style="transform:translate(1340.3px,183.29px);font-size:2.05px;line-height:3px;color:#fff;font-weight:bold">#79747E</div>
<div class="t" style="transform:translate(1267.4px,214.96px);font-size:5.65px;line-height:8px;color:#1c1b1f;letter-spacing:-0.14px">20. Inverse Surface</div>
<div class="t" style="transform:translate(1267.4px,222.15px);font-size:2.65px;line-height:4px;color:#5f5b66;width:57.5px;overflow:hidden">automatically from the color styles with predefined</div>
<div class="t" style="transform:translate(1267.4px,224.85px);font-size:2.65px;line-height:4px;color:#5f5b66;width:29.5px;overflow:hidden">opacity values so that every</div>
<div class="t" style="transform:translate(1267.4px,230.45px);font-size:2.65px;line-height:4px;color:#5f5b66;width:52px;overflow:hidden">state stays consistent. To modify a color open</div>
<div class="t" style="transform:translate(1340.3px,219.18px);font-size:2.05px;line-height:3px;color:#fff">Inverse Surface Color</div>
<div class="t" style="transform:translate(1340.3px,221.74px);font-size:2.05px;line-height:3px;color:#fff;font-weight:bold">#313033</div>
<div class="t" style="transform:translate(1267.4px,244.56px);font-size:5.65px;line-height:8px;color:#1c1b1f;letter-spacing:-0.16px">21. Inverse On Surface</div>
<div class="t" style="transform:translate(1267.4px,252.25px);font-size:2.65px;line-height:4px;color:#5f5b66;width:55px;overflow:hidden">the local styles panel then edit the style and replace</div>
<div class="t" style="transform:translate(1267.4px,254.95px);font-size:2.65px;line-height:4px;color:#5f5b66;width:56.5px;overflow:hidden">the hex value with the one from your own palette.</div>
<div class="t" style="transform:translate(1267.4px,257.65px);font-size:2.65px;line-height:4px;color:#5f5b66;width:19px;overflow:hidden">Medium and low emphasis</div>
<div class="t" style="transform:translate(1340.3px,251.33px);font-size:2.05px;line-height:3px;color:#1c1b1f">Inverse On Surface Color</div>
<div class="t" style="transform:translate(1340.3px,253.89px);font-size:2.05px;line-height:3px;color:#1c1b1f;font-weight:bold">#F4EFF4</div>
<div class="t" style="transform:translate(1267.4px,282.66px);font-size:5.65px;line-height:8px;color:#1c1b1f;letter-spacing:-0.14px">22. Inverse Primary</div>
<div class="t" style="transform:translate(1267.4px,290.05px);font-size:2.65px;line-height:4px;color:#5f5b66;width:52px;overflow:hidden">variants are applied on text and icons that appear</div>
<div class="t" style="transform:translate(1267.4px,292.75px);font-size:2.65px;line-height:4px;color:#5f5b66;width:8px;overflow:hidden">on top of</div>
<div class="t" style="transform:translate(1340.3px,288.13px);font-size:2.05px;line-height:3px;color:#170065">Inverse Primary Color</div>
<div class="t" style="transform:translate(1340.3px,290.69px);font-size:2.05px;line-height:3px;color:#170065;font-weight:bold">#C8BFFF</div>
<div class="t" style="transform:translate(1432.7px,127.56px);font-size:5.65px;line-height:8px;color:#1c1b1f;letter-spacing:-0.15px">13. Error</div>
<div class="t" style="transform:translate(1432.7px,135.05px);font-size:2.65px;line-height:4px;color:#5f5b66;width:56px;overflow:hidden">this color to keep the content readable. Container</div>
<div class="t" style="transform:translate(1505.6px,131.43px);font-size:2.05px;line-height:3px;color:#fff">Error Color</div>
<div class="t" style="transform:translate(1505.6px,133.99px);font-size:2.05px;line-height:3px;color:#fff;font-weight:bold">#B3261E</div>
<div class="t" style="transform:translate(1432.7px,150.06px);font-size:5.65px;line-height:8px;color:#1c1b1f;letter-spacing:-0.24px">14 On Error</div>
<div class="t" style="transform:translate(1432.7px,157.25px);font-size:2.65px;line-height:4px;color:#5f5b66;width:51.5px;overflow:hidden">colors are used for elements that need less emphasis</div>
<div class="t" style="transform:translate(1432.7px,159.95px);font-size:2.65px;line-height:4px;color:#5f5b66;width:57px;overflow:hidden">than the main color such as tonal buttons chips and</div>
<div class="t" style="transform:translate(1432.7px,162.65px);font-size:2.65px;line-height:4px;color:#5f5b66;width:5px;overflow:hidden">cards.</div>
<div class="t" style="transform:translate(1505.6px,161.58px);font-size:2.05px;line-height:3px;color:#b3261e">On Error Color</div>
<div class="t" style="transform:translate(1505.6px,164.14px);font-size:2.05px;line-height:3px;color:#b3261e;font-weight:bold">#FFFFFF</div>
<div class="t" style="transform:translate(1434.5px,169.5px);font-size:2.25px;line-height:3px;color:#333;width:52px;overflow:hidden">The primary color is displayed most frequently across</div>
<div class="t" style="transform:translate(1434.5px,172.2px);font-size:2.25px;line-height:3px;color:#333;width:52.5px;overflow:hidden">the screens and components of your application. Use the</div>
<div class="t" style="transform:translate(1434.5px,174.9px);font-size:2.25px;line-height:3px;color:#333;width:25px;overflow:hidden">secondary color to accent select</div>
<div class="t" style="transform:translate(1432.7px,187.96px);font-size:5.65px;line-height:8px;color:#1c1b1f;letter-spacing:-0.16px">15 Error Container</div>
<div class="t" style="transform:translate(1432.7px,195.45px);font-size:2.65px;line-height:4px;color:#5f5b66;width:53px;overflow:hidden">parts of your interface such as floating action buttons</div>
<div class="t" style="transform:translate(1432.7px,198.15px);font-size:2.65px;line-height:4px;color:#5f5b66;width:20px;overflow:hidden">and selection controls.</div>
<div class="t" style="transform:translate(1505.6px,193.23px);font-size:2.05px;line-height:3px;color:#410e0b">Error Container Color</div>
<div class="t" style="transform:translate(1505.6px,195.79px);font-size:2.05px;line-height:3px;color:#410e0b;font-weight:bold">#F9DEDC</div>
<div class="t" style="transform:translate(1432.7px,212.36px);font-size:5.65px;line-height:8px;color:#1c1b1f;letter-spacing:-0.19px">15 On Error Container</div>
<div class="t" style="transform:translate(1432.7px,219.75px);font-size:2.65px;line-height:4px;color:#5f5b66;width:51px;overflow:hidden">Brushes are generated automatically from the</div>
<div class="t" style="transform:translate(1432.7px,222.45px);font-size:2.65px;line-height:4px;color:#5f5b66;width:26px;overflow:hidden">color styles with predefined</div>
<div class="t" style="transform:translate(1505.6px,217.83px);font-size:2.05px;line-height:3px;color:#fff">On Error Container Color</div>
<div class="t" style="transform:translate(1505.6px,220.39px);font-size:2.05px;line-height:3px;color:#fff;font-weight:bold">#410E0B</div>
<div class="t" style="transform:translate(511.2px,388.53px);font-size:2.4px;line-height:3px;color:#333;letter-spacing:-0.12px">information</div>
<div class="t" style="transform:translate(506.7px,400.22px);font-size:5.65px;line-height:8px;color:#1c1b1f;letter-spacing:-0.05px">Modifying Font</div>
<div class="t" style="transform:translate(506.7px,408px);font-size:2.65px;line-height:4px;color:#5f5b66;width:75px;overflow:hidden">opacity values so that every state stays consistent. To modify a color</div>
<div class="t" style="transform:translate(506.7px,410.9px);font-size:2.65px;line-height:4px;color:#5f5b66;width:74.5px;overflow:hidden">open the local styles panel then edit the style and replace the hex</div>
<div class="t" style="transform:translate(506.7px,413.9px);font-size:2.65px;line-height:4px;color:#5f5b66;width:42px;overflow:hidden">value with the one from your own palette.</div>
<div class="t" style="transform:translate(520.4px,430.26px);font-size:1.9px;line-height:3px;color:#333;font-weight:bold">Edit style</div>
<div class="t" style="transform:translate(542.5px,430.41px);font-size:2.2px;line-height:3px;color:#777">×</div>
<div class="t" style="transform:translate(520.4px,435.33px);font-size:1.8px;line-height:3px;color:#444">Display Large</div>
<div class="t" style="transform:translate(520.4px,439.84px);font-size:1.7px;line-height:3px;color:#bbb">Description</div>
<div class="t" style="transform:translate(527.8px,448.26px);font-size:2.7px;line-height:4px;color:#333;font-weight:bold;letter-spacing:-0.25px">Rag 123</div>
<div class="t" style="transform:translate(520.4px,458.93px);font-size:1.8px;line-height:3px;color:#555">Properties</div>
<div class="t" style="transform:translate(520.4px,462.73px);font-size:1.8px;line-height:3px;color:#444">Roboto</div>
<div class="t" style="transform:translate(520.4px,466.54px);font-size:1.7px;line-height:3px;color:#555">Regular</div>
<div class="t" style="transform:translate(533.5px,466.53px);font-size:1.7px;line-height:3px;color:#555">57</div>
<div class="t" style="transform:translate(520.4px,470.14px);font-size:1.7px;line-height:3px;color:#666">‡ 64</div>
<div class="t" style="transform:translate(533.5px,470.13px);font-size:1.7px;line-height:3px;color:#666">|A| 0%</div>
<div class="t" style="transform:translate(520.4px,473.54px);font-size:1.7px;line-height:3px;color:#666">≡ 0</div>
<div class="t" style="transform:translate(548px,429.92px);font-size:1.8px;line-height:3px;color:#999">Roboto</div>
<div class="t" style="transform:translate(548px,433.82px);font-size:1.8px;line-height:3px;color:#444">Roboto Condensed</div>
<div class="t" style="transform:translate(548px,437.72px);font-size:1.8px;line-height:3px;color:#444">Roboto Flex</div>
<div class="t" style="transform:translate(548px,441.62px);font-size:1.8px;line-height:3px;color:#444">Roboto Mono</div>
<div class="t" style="transform:translate(548px,445.52px);font-size:1.8px;line-height:3px;color:#444">Roboto Serif</div>
<div class="t" style="transform:translate(548px,449.42px);font-size:1.8px;line-height:3px;color:#444">Roboto Slab</div>
<div class="t" style="transform:translate(548px,453.32px);font-size:1.8px;line-height:3px;color:#444">Rochester</div>
<div class="t" style="transform:translate(548px,457.22px);font-size:1.8px;line-height:3px;color:#444">Rock Salt</div>
<div class="t" style="transform:translate(551px,422.52px);font-size:1.7px;line-height:3px;color:#555">Select</div>
<div class="t" style="transform:translate(551px,425.22px);font-size:1.7px;line-height:3px;color:#555;letter-spacing:0.08px">your preferred font</div>
<div class="t" style="transform:translate(511.8px,481.14px);font-size:1.7px;line-height:3px;color:#555;letter-spacing:0.07px">Modify the</div>
<div class="t" style="transform:translate(511.8px,483.84px);font-size:1.7px;line-height:3px;color:#555;letter-spacing:0.04px">properties</div>
<div class="t" style="transform:translate(546.8px,477.52px);font-size:1.7px;line-height:3px;color:#555;letter-spacing:-0.07px">Look at the preview of your</div>
<div class="t" style="transform:translate(546.8px,480.22px);font-size:1.7px;line-height:3px;color:#555;letter-spacing:-0.07px">typeface at the top of the</div>
<div class="t" style="transform:translate(506.7px,496.62px);font-size:5.65px;line-height:8px;color:#1c1b1f;letter-spacing:-0.12px">Use text style</div>
<div class="t" style="transform:translate(506.7px,504.8px);font-size:2.65px;line-height:4px;color:#5f5b66;width:39px;overflow:hidden">Medium and low emphasis variants</div>
<div class="t" style="transform:translate(532px,514.43px);font-size:1.8px;line-height:3px;color:#444">Text styles</div>
<div class="t" style="transform:translate(533px,518.62px);font-size:1.8px;line-height:3px;color:#666">Search</div>
<div class="t" style="transform:translate(549.5px,518.61px);font-size:1.8px;line-height:3px;color:#666">≡  +</div>
<div class="t" style="transform:translate(533px,523.33px);font-size:1.9px;line-height:3px;color:#999">⌕</div>
<div class="t" style="transform:translate(533.4px,528.22px);font-size:1.8px;line-height:3px;color:#444">Ag Display Large</div>
<div class="t" style="transform:translate(533.4px,531.84px);font-size:1.8px;line-height:3px;color:#444">Ag Display Medium</div>
<div class="t" style="transform:translate(533.4px,535.46px);font-size:1.8px;line-height:3px;color:#444">Ag Display Small</div>
<div class="t" style="transform:translate(533.4px,539.08px);font-size:1.8px;line-height:3px;color:#444">Ag Headline Large</div>
<div class="t" style="transform:translate(533.4px,542.7px);font-size:1.8px;line-height:3px;color:#444">Ag Headline Medium</div>
<div class="t" style="transform:translate(533.4px,546.32px);font-size:1.8px;line-height:3px;color:#444">Ag Headline Small</div>
<div class="t" style="transform:translate(533.4px,549.94px);font-size:1.8px;line-height:3px;color:#444">Ag Title Large</div>
<div class="t" style="transform:translate(533.4px,553.56px);font-size:1.8px;line-height:3px;color:#444">Ag Title Medium</div>
<div class="t" style="transform:translate(533.4px,557.18px);font-size:1.8px;line-height:3px;color:#444">Ag Title Small</div>
<div class="t" style="transform:translate(509px,526.54px);font-size:1.7px;line-height:3px;color:#555;letter-spacing:0.05px">Select your text layer</div>
<div class="t" style="transform:translate(509px,529.24px);font-size:1.7px;line-height:3px;color:#555;letter-spacing:0px">and a text style</div>
<div class="t" style="transform:translate(510px,576.34px);font-size:2px;line-height:3px;color:#888;letter-spacing:-0.19px">Documentation</div>
<div class="t" style="transform:translate(535.5px,577.18px);font-size:1.45px;line-height:2px;color:#aaa;letter-spacing:-0.12px">Learn more about typography and type scale in the Material Design documentation</div>
<div class="t" style="transform:translate(605.6px,389.92px);font-size:11px;line-height:14px;color:#1c1b1f;font-weight:bold;letter-spacing:0.16px">How to edit typography?</div>
<div class="t" style="transform:translate(606px,416.56px);font-size:5.65px;line-height:8px;color:#1c1b1f;letter-spacing:-0.19px">Display</div>
<div class="t" style="transform:translate(606px,424.04px);font-size:2.65px;line-height:4px;color:#5f5b66;width:55.6px;overflow:hidden">are applied on text and icons that appear on top of</div>
<div class="t" style="transform:translate(606px,426.94px);font-size:2.65px;line-height:4px;color:#5f5b66;width:44px;overflow:hidden">this color to keep the content readable.</div>
<div class="t" style="transform:translate(606px,470.86px);font-size:5.65px;line-height:8px;color:#1c1b1f;letter-spacing:-0.13px">Headlines</div>
<div class="t" style="transform:translate(606px,478.64px);font-size:2.65px;line-height:4px;color:#5f5b66;width:55.5px;overflow:hidden">Container colors are used for elements that need</div>
<div class="t" style="transform:translate(606px,481.64px);font-size:2.65px;line-height:4px;color:#5f5b66;width:17px;overflow:hidden">less emphasis than</div>
<div class="t" style="transform:translate(606px,523.56px);font-size:5.65px;line-height:8px;color:#1c1b1f;letter-spacing:-0.08px">Titles</div>
<div class="t" style="transform:translate(606px,531.34px);font-size:2.65px;line-height:4px;color:#5f5b66;width:55.5px;overflow:hidden">the main color such as tonal buttons chips and cards.</div>
<div class="t" style="transform:translate(606px,534.24px);font-size:2.65px;line-height:4px;color:#5f5b66;width:56.5px;overflow:hidden">The primary color is displayed most frequently across</div>
<div class="t" style="transform:translate(606px,537.24px);font-size:2.65px;line-height:4px;color:#5f5b66;width:9px;overflow:hidden">the screens</div>
<div class="t" style="transform:translate(606px,575.96px);font-size:5.65px;line-height:8px;color:#1c1b1f;letter-spacing:-0.2px">Label</div>
<div class="t" style="transform:translate(606px,583.84px);font-size:2.65px;line-height:4px;color:#5f5b66;width:37.5px;overflow:hidden">and components of your application.</div>
<div class="t" style="transform:translate(606px,589.14px);font-size:2.65px;line-height:4px;color:#5f5b66;width:53.5px;overflow:hidden">Use the secondary color to accent select parts of</div>
<div class="t" style="transform:translate(606px,592.44px);font-size:2.65px;line-height:4px;color:#5f5b66;width:12px;overflow:hidden">your interface</div>
<div class="t" style="transform:translate(606px,626.36px);font-size:5.65px;line-height:8px;color:#1c1b1f;letter-spacing:-0.12px">Body</div>
<div class="t" style="transform:translate(606px,634.24px);font-size:2.65px;line-height:4px;color:#5f5b66;width:56.5px;overflow:hidden">such as floating action buttons and selection controls.</div>
<div class="t" style="transform:translate(606px,637.14px);font-size:2.65px;line-height:4px;color:#5f5b66;width:54px;overflow:hidden">Brushes are generated automatically from the color</div>
<div class="t" style="transform:translate(606px,639.94px);font-size:2.65px;line-height:4px;color:#5f5b66;width:12.5px;overflow:hidden">styles with predefined</div>
<div class="t" style="transform:translate(606px,673.46px);font-size:5.65px;line-height:8px;color:#1c1b1f;letter-spacing:-0.15px">Caption</div>
<div class="t" style="transform:translate(606px,680.84px);font-size:2.65px;line-height:4px;color:#5f5b66;width:40.5px;overflow:hidden">opacity values so that every state stays</div>
<div class="t" style="transform:translate(606px,684.24px);font-size:2.65px;line-height:4px;color:#5f5b66;width:23.5px;overflow:hidden">consistent. To modify</div>
<div class="t" style="transform:translate(706.8px,416.61px);font-size:2.6px;line-height:4px;color:#a8a4ad">Display Large</div>
<div class="t" style="transform:translate(706.8px,421.5px);font-size:6.4px;line-height:8px;color:#1c1b1f;letter-spacing:-0.1px">50% Off Everything</div>
<div class="t" style="transform:translate(706.8px,436.11px);font-size:2.6px;line-height:4px;color:#a8a4ad">Display Medium</div>
<div class="t" style="transform:translate(706.8px,440.5px);font-size:5.1px;line-height:7px;color:#1c1b1f;letter-spacing:-0.09px">50% Off Everything</div>
<div class="t" style="transform:translate(706.8px,454.21px);font-size:2.6px;line-height:4px;color:#a8a4ad">Display Small</div>
<div class="t" style="transform:translate(706.8px,457.7px);font-size:4.05px;line-height:6px;color:#1c1b1f;letter-spacing:-0.09px">50% Off Everything</div>
<div class="t" style="transform:translate(706.8px,470.91px);font-size:2.6px;line-height:4px;color:#a8a4ad">Headline Large</div>
<div class="t" style="transform:translate(706.8px,475.21px);font-size:3.6px;line-height:5px;color:#1c1b1f;letter-spacing:0.03px">Classes Offered</div>
<div class="t" style="transform:translate(706.8px,487.51px);font-size:2.6px;line-height:4px;color:#a8a4ad">Headline Medium</div>
<div class="t" style="transform:translate(706.8px,491.81px);font-size:3.2px;line-height:4px;color:#1c1b1f;letter-spacing:-0.01px">Classes Offered</div>
<div class="t" style="transform:translate(706.8px,503.71px);font-size:2.6px;line-height:4px;color:#a8a4ad">Headline Small</div>
<div class="t" style="transform:translate(706.8px,507.18px);font-size:2.8px;line-height:4px;color:#1c1b1f;letter-spacing:-0.03px">Classes Offered</div>
<div class="t" style="transform:translate(706.8px,523.61px);font-size:2.6px;line-height:4px;color:#a8a4ad">Title Large</div>
<div class="t" style="transform:translate(706.8px,528.51px);font-size:2.5px;line-height:4px;color:#1c1b1f;letter-spacing:-0.03px">Cross-Platform Products</div>
<div class="t" style="transform:translate(706.8px,541.21px);font-size:2.6px;line-height:4px;color:#a8a4ad">Title Medium</div>
<div class="t" style="transform:translate(706.8px,546.45px);font-size:1.9px;line-height:3px;color:#1c1b1f;font-weight:bold;letter-spacing:-0.13px">Cross-Platform Products</div>
<div class="t" style="transform:translate(706.8px,558.81px);font-size:2.6px;line-height:4px;color:#a8a4ad">Title Small</div>
<div class="t" style="transform:translate(706.8px,563.55px);font-size:1.7px;line-height:3px;color:#1c1b1f;font-weight:bold;letter-spacing:-0.11px">Cross-Platform Products</div>
<div class="t" style="transform:translate(706.8px,576.41px);font-size:2.6px;line-height:4px;color:#a8a4ad">Label Large</div>
<div class="t" style="transform:translate(706.8px,581.15px);font-size:1.9px;line-height:3px;color:#1c1b1f;font-weight:bold;letter-spacing:-0.28px">Sign up</div>
<div class="t" style="transform:translate(706.8px,587.41px);font-size:2.6px;line-height:4px;color:#a8a4ad">Label Medium</div>
<div class="t" style="transform:translate(706.8px,592.15px);font-size:1.7px;line-height:3px;color:#1c1b1f;font-weight:bold;letter-spacing:-0.23px">Sign up</div>
<div class="t" style="transform:translate(706.8px,598.81px);font-size:2.6px;line-height:4px;color:#a8a4ad">Label Small</div>
<div class="t" style="transform:translate(706.8px,603.88px);font-size:1.55px;line-height:2px;color:#1c1b1f;font-weight:bold;letter-spacing:-0.21px">Sign up</div>
<div class="t" style="transform:translate(706.8px,609.71px);font-size:2.6px;line-height:4px;color:#a8a4ad">Label Extra Small</div>
<div class="t" style="transform:translate(706.8px,614.78px);font-size:1.4px;line-height:2px;color:#1c1b1f;font-weight:bold;letter-spacing:-0.26px">Sign</div>
<div class="t" style="transform:translate(706.8px,627.73px);font-size:2.35px;line-height:3px;color:#a8a4ad">Body Large</div>
<div class="t" style="transform:translate(706.8px,631.32px);font-size:2.35px;line-height:3px;color:#222;width:73px;overflow:hidden">a color open the local styles panel then edit the style and replace the hex</div>
<div class="t" style="transform:translate(706.8px,634.12px);font-size:2.35px;line-height:3px;color:#222;width:69px;overflow:hidden">value with the one from your own palette. Medium and low emphasis</div>
<div class="t" style="transform:translate(706.8px,642.03px);font-size:2.35px;line-height:3px;color:#a8a4ad">Body Medium</div>
<div class="t" style="transform:translate(706.8px,645.72px);font-size:2.2px;line-height:3px;color:#222;width:72px;overflow:hidden">variants are applied on text and icons that appear on top of this color to keep</div>
<div class="t" style="transform:translate(706.8px,648.52px);font-size:2.2px;line-height:3px;color:#222;width:68px;overflow:hidden">the content readable. Container colors are used for elements that need less</div>
<div class="t" style="transform:translate(706.8px,655.83px);font-size:2.35px;line-height:3px;color:#a8a4ad">Body Small</div>
<div class="t" style="transform:translate(706.8px,658.85px);font-size:1.95px;line-height:3px;color:#222;width:74.5px;overflow:hidden">emphasis than the main color such as tonal buttons chips and cards.  The primary color is</div>
<div class="t" style="transform:translate(706.8px,661.25px);font-size:1.95px;line-height:3px;color:#222;width:36px;overflow:hidden">displayed most frequently across the screens</div>
<div class="t" style="transform:translate(706.8px,673.91px);font-size:2.6px;line-height:4px;color:#a8a4ad">Caption Large</div>
<div class="t" style="transform:translate(706.8px,678.62px);font-size:1.95px;line-height:3px;color:#1c1b1f;letter-spacing:0.04px">Uno Platform Material toolkit</div>
<div class="t" style="transform:translate(706.8px,684.81px);font-size:2.6px;line-height:4px;color:#a8a4ad">Caption Medium</div>
<div class="t" style="transform:translate(706.8px,689.52px);font-size:1.85px;line-height:3px;color:#1c1b1f;letter-spacing:0.05px">Uno Platform Material toolkit</div>
<div class="t" style="transform:translate(706.8px,695.81px);font-size:2.6px;line-height:4px;color:#a8a4ad">Caption Large</div>
<div class="t" style="transform:translate(706.8px,700.02px);font-size:1.7px;line-height:3px;color:#1c1b1f;letter-spacing:0.02px">Uno Platform Material toolkit</div>
<div class="t" style="transform:translate(912.4px,389.94px);font-size:11px;line-height:14px;color:#1c1b1f;font-weight:bold;letter-spacing:0.17px">Here’s a preview of your theme</div>
<div class="t" style="transform:translate(914.2px,397.24px);font-size:13.75px;line-height:18px;color:#b5b3b8;letter-spacing:0.17px">00. ...</div>
<div class="t" style="transform:translate(981.2px,397.2px);font-size:13.75px;line-height:18px;color:#b5b3b8;letter-spacing:0.17px">01. ...</div>
<div class="t" style="transform:translate(1048.2px,397.16px);font-size:13.75px;line-height:18px;color:#b5b3b8;letter-spacing:0.17px">02. ...</div>
<div class="t" style="transform:translate(1115.3px,397.12px);font-size:13.75px;line-height:18px;color:#b5b3b8;letter-spacing:0.17px">03. ...</div>
<div class="t" style="transform:translate(1182px,440.08px);font-size:13.75px;line-height:18px;color:#b5b3b8;letter-spacing:0.04px">03.1...</div>
<div class="t" style="transform:translate(914.2px,518.44px);font-size:13.75px;line-height:18px;color:#b5b3b8;letter-spacing:0.17px">04. ...</div>
<div class="t" style="transform:translate(981.2px,518.4px);font-size:13.75px;line-height:18px;color:#b5b3b8;letter-spacing:0.17px">05. ...</div>
<div class="t" style="transform:translate(1048.2px,518.36px);font-size:13.75px;line-height:18px;color:#b5b3b8;letter-spacing:0.17px">06. ...</div>
<div class="t" style="transform:translate(916.7px,450.15px);font-size:6.6px;line-height:9px;color:#fff;font-weight:bold;font-family:'Liberation Serif',serif;letter-spacing:-.1px">Uno</div>
<div class="t" style="transform:translate(929.4px,452.15px);font-size:3px;line-height:4px;color:#e8e4ff">•</div>
<div class="t" style="transform:translate(931.8px,450.94px);font-size:5.8px;line-height:8px;color:#f0edff;letter-spacing:0.02px">commerce</div>
<div class="t" style="transform:translate(985px,424.11px);font-size:3.1px;line-height:4px;color:#333;letter-spacing:-0.04px">Welcome.</div>
<div class="t" style="transform:translate(985px,430.46px);font-size:1.9px;line-height:3px;color:#333;letter-spacing:-0.12px">Log in to your account</div>
<div class="t" style="transform:translate(986.8px,436.65px);font-size:1.8px;line-height:3px;color:#aaa">Email</div>
<div class="t" style="transform:translate(986.8px,445.25px);font-size:1.8px;line-height:3px;color:#aaa">Password</div>
<div class="t" style="transform:translate(1020.2px,445.23px);font-size:1.8px;line-height:3px;color:#666">◉</div>
<div class="t" style="transform:translate(985px,451.75px);font-size:1.8px;line-height:3px;color:#5946d2;letter-spacing:-0.11px">Forgot Password?</div>
<div class="t" style="transform:translate(1002.8px,456.85px);font-size:1.7px;line-height:3px;color:#fff">Log in</div>
<div class="t" style="transform:translate(999.2px,499.2px);font-size:1.6px;line-height:2px;color:#888;letter-spacing:-0.12px">Create an account</div>
<div class="t" style="transform:translate(1049.8px,421.02px);font-size:2.3px;line-height:3px;color:#e8e4ff">Uno Commerce</div>
<div class="t" style="transform:translate(1058.6px,426.61px);font-size:1.7px;line-height:3px;color:#5946d2">Deals</div>
<div class="t" style="transform:translate(1081.2px,426.6px);font-size:1.7px;line-height:3px;color:#888">Favorites</div>
<div class="t" style="transform:translate(1052.2px,467.27px);font-size:1.5px;line-height:2px;color:#bbb">Running shoes</div>
<div class="t" style="transform:translate(1052.2px,469.22px);font-size:1.9px;line-height:3px;color:#333;letter-spacing:-0.1px">Fresh Foam More v4 Trail Running</div>
<div class="t" style="transform:translate(1053.6px,497.21px);font-size:1.8px;line-height:3px;color:#555">▲</div>
<div class="t" style="transform:translate(1052.2px,501.47px);font-size:1.5px;line-height:2px;color:#333">Home</div>
<div class="t" style="transform:translate(1065.2px,497.21px);font-size:1.8px;line-height:3px;color:#555">⌕</div>
<div class="t" style="transform:translate(1063.8px,501.46px);font-size:1.5px;line-height:2px;color:#777">Search</div>
<div class="t" style="transform:translate(1076.8px,497.2px);font-size:1.8px;line-height:3px;color:#555">▲</div>
<div class="t" style="transform:translate(1075.4px,501.45px);font-size:1.5px;line-height:2px;color:#777">Profile</div>
<div class="t" style="transform:translate(1116.9px,420.98px);font-size:2.3px;line-height:3px;color:#e8e4ff">Uno Commerce</div>
<div class="t" style="transform:translate(1119.3px,428.47px);font-size:2px;line-height:3px;color:#555">⌕</div>
<div class="t" style="transform:translate(1123.3px,428.42px);font-size:1.3px;line-height:2px;color:#5946d2">Search</div>
<div class="t" style="transform:translate(1123.3px,429.37px);font-size:1.8px;line-height:3px;color:#333">Running</div>
<div class="t" style="transform:translate(1155.9px,428.45px);font-size:2px;line-height:3px;color:#555">⊗</div>
<div class="t" style="transform:translate(1117.5px,434.98px);font-size:1.7px;line-height:3px;color:#666;letter-spacing:-0.11px">Top Results for Running</div>
<div class="t" style="transform:translate(1154.9px,434.96px);font-size:1.7px;line-height:3px;color:#5946d2">Filter</div>
<div class="t" style="transform:translate(1126.1px,442.02px);font-size:1.3px;line-height:2px;color:#aaa">Running</div>
<div class="t" style="transform:translate(1126.1px,443.77px);font-size:1.9px;line-height:3px;color:#222;letter-spacing:-0.04px">Fresh Foam X 1080v12</div>
<div class="t" style="transform:translate(1152.9px,443.16px);font-size:1.9px;line-height:3px;color:#555;letter-spacing:0.02px">$149.99</div>
<div class="t" style="transform:translate(1126.1px,452.42px);font-size:1.3px;line-height:2px;color:#aaa">Running</div>
<div class="t" style="transform:translate(1126.1px,454.17px);font-size:1.9px;line-height:3px;color:#222;letter-spacing:0.02px">Men’s Running Shoes</div>
<div class="t" style="transform:translate(1152.9px,453.56px);font-size:1.9px;line-height:3px;color:#555;letter-spacing:0.02px">$149.99</div>
<div class="t" style="transform:translate(1126.1px,462.82px);font-size:1.3px;line-height:2px;color:#aaa">Running</div>
<div class="t" style="transform:translate(1126.1px,464.57px);font-size:1.9px;line-height:3px;color:#222;letter-spacing:-0.01px">Propel Running Shorts</div>
<div class="t" style="transform:translate(1152.9px,463.96px);font-size:1.9px;line-height:3px;color:#555;letter-spacing:0.02px">$149.99</div>
<div class="t" style="transform:translate(1126.1px,473.22px);font-size:1.3px;line-height:2px;color:#aaa">Running</div>
<div class="t" style="transform:translate(1126.1px,474.97px);font-size:1.9px;line-height:3px;color:#222;letter-spacing:0.08px">Fresh Foam More v4</div>
<div class="t" style="transform:translate(1152.9px,474.36px);font-size:1.9px;line-height:3px;color:#555;letter-spacing:0.02px">$149.99</div>
<div class="t" style="transform:translate(1126.1px,483.62px);font-size:1.3px;line-height:2px;color:#aaa">Running</div>
<div class="t" style="transform:translate(1126.1px,485.37px);font-size:1.9px;line-height:3px;color:#222;letter-spacing:-0.09px">Impact Run Short Sleeve</div>
<div class="t" style="transform:translate(1152.9px,484.76px);font-size:1.9px;line-height:3px;color:#555;letter-spacing:0.02px">$149.99</div>
<div class="t" style="transform:translate(1120.7px,497.17px);font-size:1.8px;line-height:3px;color:#555">▲</div>
<div class="t" style="transform:translate(1119.3px,501.43px);font-size:1.5px;line-height:2px;color:#777">Home</div>
<div class="t" style="transform:translate(1132.3px,497.17px);font-size:1.8px;line-height:3px;color:#555">⌕</div>
<div class="t" style="transform:translate(1130.9px,501.42px);font-size:1.5px;line-height:2px;color:#333">Search</div>
<div class="t" style="transform:translate(1143.9px,497.16px);font-size:1.8px;line-height:3px;color:#555">▲</div>
<div class="t" style="transform:translate(1142.5px,501.41px);font-size:1.5px;line-height:2px;color:#777">Profile</div>
<div class="t" style="transform:translate(1202.5px,461.51px);font-size:2.5px;line-height:4px;color:#333;letter-spacing:0.08px">Filters</div>
<div class="t" style="transform:translate(1185.5px,469.14px);font-size:1.9px;line-height:3px;color:#333;letter-spacing:-0.16px">Categories</div>
<div class="t" style="transform:translate(1186.9px,474.89px);font-size:1.6px;line-height:2px;color:#3a2fa0">Shoes ✕</div>
<div class="t" style="transform:translate(1198.1px,474.88px);font-size:1.6px;line-height:2px;color:#3a2fa0">Accessories ✕</div>
<div class="t" style="transform:translate(1212.9px,474.88px);font-size:1.6px;line-height:2px;color:#3a2fa0">Outerwear ✕</div>
<div class="t" style="transform:translate(1185.5px,479.93px);font-size:1.8px;line-height:3px;color:#444;letter-spacing:-0.1px">Deals only</div>
<div class="t" style="transform:translate(1185.5px,486.13px);font-size:1.8px;line-height:3px;color:#444">Sort</div>
<div class="t" style="transform:translate(1218.7px,486.97px);font-size:1.6px;line-height:2px;color:#999;letter-spacing:0.01px">Price: Low</div>
<div class="t" style="transform:translate(1185.5px,491.93px);font-size:1.8px;line-height:3px;color:#444;letter-spacing:-0.14px">Reviews</div>
<div class="t" style="transform:translate(1223.5px,492.77px);font-size:1.6px;line-height:2px;color:#999">4+</div>
<div class="t" style="transform:translate(1221.3px,503.51px);font-size:1.8px;line-height:3px;color:#5946d2;letter-spacing:-0.14px">Apply</div>
<div class="t" style="transform:translate(915.8px,542.6px);font-size:2.3px;line-height:3px;color:#e8e4ff">Uno Commerce</div>
<div class="t" style="transform:translate(916.2px,548.15px);font-size:2.9px;line-height:4px;color:#222;letter-spacing:0.01px">Fresh Foam More v4 Trail</div>
<div class="t" style="transform:translate(955.8px,549.86px);font-size:2.2px;line-height:3px;color:#777">♡</div>
<div class="t" style="transform:translate(916.2px,552.15px);font-size:2.9px;line-height:4px;color:#222;letter-spacing:0.07px">Running Shoes - Men’s</div>
<div class="t" style="transform:translate(916.2px,607.3px);font-size:1.7px;line-height:3px;color:#aaa;letter-spacing:-0.06px">Running shoes</div>
<div class="t" style="transform:translate(952px,607.28px);font-size:1.9px;line-height:3px;color:#5946d2;letter-spacing:0.02px">$149.99</div>
<div class="t" style="transform:translate(932.2px,615.89px);font-size:1.7px;line-height:3px;color:#fff">▣ Add to cart</div>
<div class="t" style="transform:translate(933.2px,621.59px);font-size:1.7px;line-height:3px;color:#5946d2">Add to Fav</div>
<div class="t" style="transform:translate(916.2px,633.28px);font-size:2.1px;line-height:3px;color:#222;letter-spacing:0.13px">Product Detail</div>
<div class="t" style="transform:translate(916.2px,636.33px);font-size:1.85px;line-height:3px;color:#555;width:41px;overflow:hidden">and components of your application. Use the secondary</div>
<div class="t" style="transform:translate(916.2px,638.48px);font-size:1.85px;line-height:3px;color:#555;width:40px;overflow:hidden">color to accent select parts of your interface such as</div>
<div class="t" style="transform:translate(916.2px,640.63px);font-size:1.85px;line-height:3px;color:#555;width:41.5px;overflow:hidden">floating action buttons and selection controls. Brushes</div>
<div class="t" style="transform:translate(916.2px,642.78px);font-size:1.85px;line-height:3px;color:#555;width:40px;overflow:hidden">are generated automatically from the color styles with</div>
<div class="t" style="transform:translate(916.2px,644.93px);font-size:1.85px;line-height:3px;color:#555;width:41px;overflow:hidden">predefined opacity values so that every state stays consistent.</div>
<div class="t" style="transform:translate(916.2px,647.08px);font-size:1.85px;line-height:3px;color:#555;width:22px;overflow:hidden">To modify a color open the local</div>
<div class="t" style="transform:translate(916.2px,654.28px);font-size:2.1px;line-height:3px;color:#222;letter-spacing:0.04px">Reviews</div>
<div class="t" style="transform:translate(916.2px,657.9px);font-size:2px;line-height:3px;color:#5946d2;letter-spacing:0.2px">★ ★ ★ ★ ★</div>
<div class="t" style="transform:translate(930.6px,657.89px);font-size:1.7px;line-height:3px;color:#888;letter-spacing:-0.02px">7 reviews</div>
<div class="t" style="transform:translate(925.2px,663.1px);font-size:1.9px;line-height:3px;color:#222;letter-spacing:-0.06px">Olivia D.</div>
<div class="t" style="transform:translate(925.2px,665.43px);font-size:1.8px;line-height:3px;color:#444;width:33.5px;overflow:hidden">styles panel then edit the style and replace the</div>
<div class="t" style="transform:translate(925.2px,667.53px);font-size:1.8px;line-height:3px;color:#444;width:25px;overflow:hidden">hex value with the one from your</div>
<div class="t" style="transform:translate(925.2px,673.5px);font-size:1.9px;line-height:3px;color:#222;letter-spacing:0.08px">Matt K.</div>
<div class="t" style="transform:translate(925.2px,675.83px);font-size:1.8px;line-height:3px;color:#444;width:33.5px;overflow:hidden">own palette. Medium and low emphasis variants</div>
<div class="t" style="transform:translate(925.2px,677.93px);font-size:1.8px;line-height:3px;color:#444;width:25px;overflow:hidden">are applied on text and icons that</div>
<div class="t" style="transform:translate(925.2px,683.9px);font-size:1.9px;line-height:3px;color:#222;letter-spacing:0.09px">Sara T.</div>
<div class="t" style="transform:translate(925.2px,686.23px);font-size:1.8px;line-height:3px;color:#444;width:14px;overflow:hidden">appear on top of this</div>
<div class="t" style="transform:translate(919.6px,694.29px);font-size:1.8px;line-height:3px;color:#555">▲</div>
<div class="t" style="transform:translate(918.2px,698.55px);font-size:1.5px;line-height:2px;color:#333">Home</div>
<div class="t" style="transform:translate(931.2px,694.29px);font-size:1.8px;line-height:3px;color:#555">⌕</div>
<div class="t" style="transform:translate(929.8px,698.54px);font-size:1.5px;line-height:2px;color:#777">Search</div>
<div class="t" style="transform:translate(942.8px,694.28px);font-size:1.8px;line-height:3px;color:#555">▲</div>
<div class="t" style="transform:translate(941.4px,698.53px);font-size:1.5px;line-height:2px;color:#777">Profile</div>
<div class="t" style="transform:translate(986.6px,547.54px);font-size:2.6px;line-height:4px;color:#999">☺</div>
<div class="t" style="transform:translate(984.6px,554.84px);font-size:2.6px;line-height:4px;color:#333;letter-spacing:0.08px">Andrew Grant</div>
<div class="t" style="transform:translate(985.2px,563.26px);font-size:1.9px;line-height:3px;color:#666">◎</div>
<div class="t" style="transform:translate(989.6px,563.26px);font-size:1.9px;line-height:3px;color:#333;letter-spacing:-0.04px">Account</div>
<div class="t" style="transform:translate(1021.8px,563.42px);font-size:2.2px;line-height:3px;color:#666">›</div>
<div class="t" style="transform:translate(985.2px,569.76px);font-size:1.9px;line-height:3px;color:#666">◎</div>
<div class="t" style="transform:translate(989.6px,569.76px);font-size:1.9px;line-height:3px;color:#333;letter-spacing:-0.03px">Settings</div>
<div class="t" style="transform:translate(1021.8px,569.92px);font-size:2.2px;line-height:3px;color:#666">›</div>
<div class="t" style="transform:translate(985.2px,576.26px);font-size:1.9px;line-height:3px;color:#666">◎</div>
<div class="t" style="transform:translate(989.6px,576.26px);font-size:1.9px;line-height:3px;color:#333;letter-spacing:-0.07px">Orders</div>
<div class="t" style="transform:translate(1021.8px,576.42px);font-size:2.2px;line-height:3px;color:#666">›</div>
<div class="t" style="transform:translate(985.2px,582.76px);font-size:1.9px;line-height:3px;color:#666">◎</div>
<div class="t" style="transform:translate(989.6px,582.76px);font-size:1.9px;line-height:3px;color:#333;letter-spacing:-0.08px">Help</div>
<div class="t" style="transform:translate(1021.8px,582.92px);font-size:2.2px;line-height:3px;color:#666">›</div>
<div class="t" style="transform:translate(1002.6px,592.65px);font-size:1.7px;line-height:3px;color:#5946d2">Log out</div>
<div class="t" style="transform:translate(986.6px,618.85px);font-size:1.8px;line-height:3px;color:#555">▲</div>
<div class="t" style="transform:translate(985.2px,623.11px);font-size:1.5px;line-height:2px;color:#777">Home</div>
<div class="t" style="transform:translate(998.2px,618.85px);font-size:1.8px;line-height:3px;color:#555">⌕</div>
<div class="t" style="transform:translate(996.8px,623.1px);font-size:1.5px;line-height:2px;color:#777">Search</div>
<div class="t" style="transform:translate(1009.8px,618.84px);font-size:1.8px;line-height:3px;color:#555">▲</div>
<div class="t" style="transform:translate(1008.4px,623.09px);font-size:1.5px;line-height:2px;color:#333">Profile</div>
<div class="t" style="transform:translate(1049.8px,542.52px);font-size:2.3px;line-height:3px;color:#e8e4ff"></div>
<div class="t" style="transform:translate(1050.8px,542.6px);font-size:2.6px;line-height:4px;color:#fff">←</div>
<div class="t" style="transform:translate(1057.2px,542.6px);font-size:2.7px;line-height:4px;color:#eeeaff;letter-spacing:-0.17px">Your Cart</div>
<div class="t" style="transform:translate(1050.2px,549.82px);font-size:1.7px;line-height:3px;color:#777;letter-spacing:0.02px">3 items</div>
<div class="t" style="transform:translate(1058.8px,556.06px);font-size:1.3px;line-height:2px;color:#aaa">Running</div>
<div class="t" style="transform:translate(1058.8px,557.61px);font-size:1.9px;line-height:3px;color:#222;letter-spacing:0px">Fuelcell Rebel</div>
<div class="t" style="transform:translate(1060.8px,561.01px);font-size:1.7px;line-height:3px;color:#5946d2">−   1   +</div>
<div class="t" style="transform:translate(1053.85px,568.66px);font-size:1.3px;line-height:2px;color:#aaa">Running</div>
<div class="t" style="transform:translate(1053.85px,570.22px);font-size:1.9px;line-height:3px;color:#222;letter-spacing:0.08px">Fresh Foam More v4</div>
<div class="t" style="transform:translate(1055.85px,573.62px);font-size:1.7px;line-height:3px;color:#5946d2">−   1   +</div>
<div class="t" style="transform:translate(1058.8px,581.26px);font-size:1.3px;line-height:2px;color:#aaa">Running</div>
<div class="t" style="transform:translate(1058.8px,582.81px);font-size:1.9px;line-height:3px;color:#222;letter-spacing:-0.1px">Propel Running Shorts</div>
<div class="t" style="transform:translate(1060.8px,586.21px);font-size:1.7px;line-height:3px;color:#5946d2">−   1   +</div>
<div class="t" style="transform:translate(1050.2px,597.01px);font-size:2.4px;line-height:3px;color:#222;letter-spacing:0.03px">Order summary</div>
<div class="t" style="transform:translate(1050.2px,602.41px);font-size:1.8px;line-height:3px;color:#444">Subtotal</div>
<div class="t" style="transform:translate(1086.8px,602.39px);font-size:1.8px;line-height:3px;color:#444">$449.97</div>
<div class="t" style="transform:translate(1050.2px,605.61px);font-size:1.8px;line-height:3px;color:#444">Discounts</div>
<div class="t" style="transform:translate(1086.8px,605.59px);font-size:1.8px;line-height:3px;color:#444">$0.00</div>
<div class="t" style="transform:translate(1050.2px,608.81px);font-size:1.8px;line-height:3px;color:#444">Est. Shipping</div>
<div class="t" style="transform:translate(1086.8px,608.79px);font-size:1.8px;line-height:3px;color:#444">$9.99</div>
<div class="t" style="transform:translate(1050.2px,612.01px);font-size:1.8px;line-height:3px;color:#444">Total</div>
<div class="t" style="transform:translate(1084.2px,612.14px);font-size:2.3px;line-height:3px;color:#222;font-weight:bold">$459.96</div>
<div class="t" style="transform:translate(1067.8px,620.21px);font-size:1.7px;line-height:3px;color:#fff">Checkout</div>
<div class="t" style="transform:translate(511px,768.93px);font-size:2.4px;line-height:3px;color:#333;letter-spacing:-0.12px">information</div>
<div class="t" style="transform:translate(506.7px,781.55px);font-size:5.2px;line-height:7px;color:#1c1b1f;letter-spacing:0.14px">Acces to component library</div>
<div class="t" style="transform:translate(506.7px,789.94px);font-size:1.8px;line-height:3px;color:#555;letter-spacing:0.12px">Go to the assets tab</div>
<div class="t" style="transform:translate(540px,789.92px);font-size:1.8px;line-height:3px;color:#555;letter-spacing:0.06px">to get the component list</div>
<div class="t" style="transform:translate(530.6px,799.13px);font-size:1.9px;line-height:3px;color:#444">Components</div>
<div class="t" style="transform:translate(561px,799.11px);font-size:2px;line-height:3px;color:#777">›</div>
<div class="t" style="transform:translate(530.6px,803.53px);font-size:1.9px;line-height:3px;color:#aaa">Search</div>
<div class="t" style="transform:translate(561px,803.51px);font-size:2px;line-height:3px;color:#777">›</div>
<div class="t" style="transform:translate(530.6px,812.33px);font-size:1.9px;line-height:3px;color:#444">Local components</div>
<div class="t" style="transform:translate(530.6px,816.73px);font-size:1.9px;line-height:3px;color:#444">Used in this file</div>
<div class="t" style="transform:translate(561px,816.71px);font-size:2px;line-height:3px;color:#777">›</div>
<div class="t" style="transform:translate(530.6px,821.13px);font-size:1.9px;line-height:3px;color:#444">Uno Material Toolkit</div>
<div class="t" style="transform:translate(530.6px,825.53px);font-size:1.9px;line-height:3px;color:#444">Team library</div>
<div class="t" style="transform:translate(514px,813.74px);font-size:1.7px;line-height:3px;color:#444;letter-spacing:-0.15px">Search a component</div>
<div class="t" style="transform:translate(514px,816.44px);font-size:1.7px;line-height:3px;color:#444">by name</div>
<div class="t" style="transform:translate(566.6px,806.71px);font-size:1.7px;line-height:3px;color:#555;letter-spacing:-0.1px">Publish them</div>
<div class="t" style="transform:translate(566.6px,809.41px);font-size:1.7px;line-height:3px;color:#555">or filter</div>
<div class="t" style="transform:translate(605.4px,770.32px);font-size:11px;line-height:14px;color:#1c1b1f;font-weight:bold;letter-spacing:0.17px">How to start a new project?</div>
<div class="t" style="transform:translate(622.6px,802.65px);font-size:5.1px;line-height:7px;color:#1c1b1f;letter-spacing:0.07px">Step 1 - Create a new page</div>
<div class="t" style="transform:translate(622.6px,810.9px);font-size:1.95px;line-height:3px;color:#555;width:37px;overflow:hidden">color to keep the content readable. Container</div>
<div class="t" style="transform:translate(722.7px,802.59px);font-size:5.1px;line-height:7px;color:#1c1b1f;letter-spacing:0.1px">Step 2 - Create a page template</div>
<div class="t" style="transform:translate(722.7px,810.84px);font-size:1.95px;line-height:3px;color:#555;width:81px;overflow:hidden">colors are used for elements that need less emphasis than the main color such as tonal buttons</div>
<div class="t" style="transform:translate(722.7px,813.34px);font-size:1.95px;line-height:3px;color:#555;width:28px;overflow:hidden">chips and cards.  The primary color</div>
<div class="t" style="transform:translate(829.7px,802.53px);font-size:5.1px;line-height:7px;color:#1c1b1f;letter-spacing:0.12px">Step 3 - Customize your template</div>
<div class="t" style="transform:translate(829.7px,810.78px);font-size:1.95px;line-height:3px;color:#555;width:82px;overflow:hidden">is displayed most frequently across the screens and components of your application. Use the secondary</div>
<div class="t" style="transform:translate(829.7px,813.28px);font-size:1.95px;line-height:3px;color:#555;width:42px;overflow:hidden">color to accent select parts of your interface such as</div>
<div class="t" style="transform:translate(937.5px,802.46px);font-size:5.1px;line-height:7px;color:#1c1b1f;letter-spacing:0.13px">Step 4 - Detach the component</div>
<div class="t" style="transform:translate(937.5px,810.71px);font-size:1.95px;line-height:3px;color:#555;width:83px;overflow:hidden">floating action buttons and selection controls. Brushes are generated automatically from the color styles</div>
<div class="t" style="transform:translate(937.5px,813.21px);font-size:1.95px;line-height:3px;color:#555;width:26px;overflow:hidden">with predefined opacity values so</div>
<div class="t" style="transform:translate(1045.5px,802.4px);font-size:5.1px;line-height:7px;color:#1c1b1f;letter-spacing:0.07px">Step 5 - Rename your page</div>
<div class="t" style="transform:translate(1045.5px,810.65px);font-size:1.95px;line-height:3px;color:#555;width:54px;overflow:hidden">that every state stays consistent. To modify a color open the local</div>
<div class="t" style="transform:translate(1153.4px,802.33px);font-size:5.1px;line-height:7px;color:#1c1b1f;letter-spacing:0.15px">Step 6 - Start adding components</div>
<div class="t" style="transform:translate(1153.4px,810.58px);font-size:1.95px;line-height:3px;color:#555;width:50px;overflow:hidden">styles panel then edit the style and replace the hex value with</div>
</div>
</div>
<!--C1-->
</div>
<div id="tb">
<div id="sel"></div>
<!--TB0-->
<svg width="540" height="60" viewBox="0 0 540 60" style="left:0;top:0" fill="none" stroke="#fff" stroke-width="1.25" stroke-linejoin="round" stroke-linecap="butt">
<!-- figma logo -->
<g stroke-width="1.2">
<path d="M22.4 20.6H19a3.2 3.2 0 0 0 0 6.4h3.4z"/>
<path d="M22.4 20.6h3.4a3.2 3.2 0 0 1 0 6.4h-3.4z"/>
<path d="M22.4 27H19a3.2 3.2 0 0 0 0 6.4h3.4z"/>
<circle cx="25.8" cy="30.2" r="3.2"/>
<path d="M22.4 33.4H19a3.2 3.2 0 1 0 3.4 3.2z"/>
</g>
<!-- chevrons -->
<path d="M39.2 28.6l3.9 3.4 3.9-3.4"/>
<path d="M107.2 28.6l3.9 3.4 3.9-3.4"/>
<path d="M167.2 28.6l3.9 3.4 3.9-3.4"/>
<path d="M227 28.6l3.9 3.4 3.9-3.4"/>
<path d="M287 28.6l3.9 3.4 3.9-3.4"/>
<!-- move arrow -->
<path d="M81.4 22.4L95.6 30.2 88.6 32.4 85 38 z" stroke-linejoin="miter"/>
<!-- frame -->
<path d="M144.6 20v20M155.7 20v20M140 24.7h20M140 35.9h20" stroke-width="1.3"/>
<!-- rect -->
<rect x="198.6" y="20.7" width="20" height="18.7" stroke="#d6d6d6" stroke-width="1.6"/>
<!-- pen -->
<path d="M258.5 20.7C263 21.3 269.4 22.7 272.5 25.5 274.6 27.5 275.4 30 275.6 32.6L278.2 35.3 274.1 38.9 271.2 36C268 36.4 264.4 36.2 262.5 34.6 261.5 33.6 261.1 32 260.7 30z" stroke-linejoin="round"/>
<path d="M258.8 21L267.8 29.6"/>
<circle cx="268.5" cy="30.3" r="1.7" fill="#fff" stroke="none"/>
<!-- text T -->
<path d="M318.4 25.4v-4.6h15.6v4.6M326.4 20.8v18.6M322 39.4h9.4" stroke-width="1.3" stroke-linejoin="miter"/>
<!-- components -->
<rect x="370" y="20.6" width="5.6" height="5.6"/>
<path d="M384.1 20.2v6.2M381 23.3h6.2"/>
<path d="M372.7 30.5l3.9 3.9-3.9 3.9-3.9-3.9z"/>
<rect x="381.4" y="31.6" width="5.6" height="5.6"/>
<!-- hand -->
<path d="M421.6 31.8V22.55a1.95 1.95 0 0 1 3.9 0V20.05a1.95 1.95 0 0 1 3.9 0V20.85a1.95 1.95 0 0 1 3.9 0V24.5a2.15 2.15 0 0 1 4.3 0V34c0 5.4-3 9-8 9-3.6 0-5.6-1.6-7.6-4l-4.6-5.6c-1.4-1.8.8-3.6 2.4-2.2l1.8 1.8z"/>
<path d="M425.5 22.55V29.6M429.4 20.05V29.6M433.3 20.85V29.6"/>
<!-- comment -->
<path d="M468.9 36.2a10 10 0 1 1 3.4 3.2L465.8 40.4z" stroke-linejoin="round"/>
</svg>
<svg style="left:720px;top:0" width="60" height="60" viewBox="0 0 60 60" fill="none"><circle cx="29" cy="30" r="14.6" stroke="#8c8c8c" stroke-width="1"/><text x="29" y="34" text-anchor="middle" font-family="Liberation Sans,sans-serif" font-weight="bold" font-size="11.5" fill="#fff">nv</text></svg>
<div id="title" style="left:780.8px;font-size:18px"><span style="color:#b3b3b3;letter-spacing:.36px">Drafts</span><span style="color:#6e6e6e;display:inline-block;width:24.6px;text-align:center;letter-spacing:0">/</span><span id="ttl" style="letter-spacing:.285px">Uno Platform Material Toolkit (Community)</span></div>
<svg style="left:1210px;top:20px" width="20" height="20" viewBox="0 0 20 20" fill="none" stroke="#fff" stroke-width="1.25"><path d="M7.4 8.4l3.9 3.4 3.9-3.4"/></svg>
<svg style="left:1545px;top:10px" width="60" height="40" viewBox="1545 10 60 40" fill="none" stroke="#fff" stroke-width="1.2"><path d="M1553.4 37V30a10.7 10.7 0 0 1 21.4 0v7"/><path d="M1553.4 33.4v4.2q0 1.8 1.6 2.2l2.8.4v-8.6l-2.8.4q-1.6.4-1.6 1.4zM1574.8 33.4v4.2q0 1.8-1.6 2.2l-2.8.4v-8.6l2.8.4q1.6.4 1.6 1.4z"/><circle cx="1610.6" cy="29.6" r="15" fill="#ffcd29" stroke="none"/></svg>
<!--TB1-->
</div>
<div id="lp">
<!--P0-->
<div class="t b" style="left:19px;top:15px;letter-spacing:0.20px">Layers</div>
<div class="t b" style="left:82.8px;top:15px;color:#ababab;-webkit-text-stroke-width:.15px;letter-spacing:0.30px">Assets</div>
<div class="t" id="gs" style="left:167.5px;top:15px;color:#333;letter-spacing:0.39px">Getting started</div>
<svg style="left:270px;top:20px" width="12" height="10" viewBox="270 80 12 10" fill="none" stroke="#a6a6a6" stroke-width="1.1"><path d="M272.2 86.6l3.9-3.6 3.9 3.6"/></svg>
<div class="hr" style="top:50px"></div>
<div class="t b" style="left:19px;top:65px;letter-spacing:0.01px">Pages</div>
<svg style="left:260px;top:66px" width="18" height="18" viewBox="260 126 18 18" fill="none" stroke="#333" stroke-width="1.25"><path d="M269 128v14M262 135h14"/></svg>
<div class="t" style="left:49px;top:105px;letter-spacing:-0.04px">Cover</div>
<div class="t" style="left:49px;top:145px;letter-spacing:0.52px">Getting started</div>
<div class="t" style="left:49px;top:184px">—</div>
<div class="t" style="left:49px;top:225px;letter-spacing:0.10px">Theme</div>
<svg style="left:22px;top:148px" width="14" height="12" viewBox="22 208 14 12" fill="none" stroke="#1e1e1e" stroke-width="1.9"><path d="M25.2 214.2l2.6 2.6 5-5.6"/></svg>
<div class="hr" style="top:259px"></div>
<svg style="left:22px;top:273px" width="14" height="14" viewBox="0 0 14 14" fill="#000" shape-rendering="crispEdges"><rect x="1" y="1" width="10" height="2"/><rect x="1" y="6" width="12" height="2"/><rect x="1" y="11" width="7" height="2"/></svg>
<div class="t b" style="left:49px;top:270px;letter-spacing:0.40px">Welcome!</div>
<svg style="left:243px;top:273px" width="11" height="14" viewBox="0 0 11 14" fill="none"><rect x="1" y="5.6" width="9" height="7.4" fill="#1e1e1e"/><path d="M2.9 6V4a2.6 2.6 0 0 1 5.2 0V6" stroke="#1e1e1e" stroke-width="1.25"/></svg>
<svg style="left:22px;top:313px" width="15" height="15" viewBox="0 0 15 15" fill="none" stroke="#000" stroke-width="1.2"><path d="M4.6 .8v13.8M10.7 .8v13.8M.8 4.8h13.8M.8 10.5h13.8"/></svg>
<div class="t b" style="left:49px;top:310px;letter-spacing:0.48px">Edit color styles</div>
<svg style="left:22px;top:353px" width="15" height="15" viewBox="0 0 15 15" fill="none" stroke="#000" stroke-width="1.2"><path d="M4.6 .8v13.8M10.7 .8v13.8M.8 4.8h13.8M.8 10.5h13.8"/></svg>
<div class="t b" style="left:49px;top:350px;letter-spacing:0.55px">Typography</div>
<svg style="left:243px;top:353px" width="11" height="14" viewBox="0 0 11 14" fill="none"><rect x="1" y="5.6" width="9" height="7.4" fill="#1e1e1e"/><path d="M2.9 6V4a2.6 2.6 0 0 1 5.2 0V6" stroke="#1e1e1e" stroke-width="1.25"/></svg>
<svg style="left:22px;top:393px" width="14" height="14" viewBox="0 0 14 14" fill="#000" shape-rendering="crispEdges"><rect x="1" y="1" width="10" height="2"/><rect x="1" y="6" width="12" height="2"/><rect x="1" y="11" width="7" height="2"/></svg>
<div class="t b" style="left:49px;top:390px;letter-spacing:0.34px">00. Splash</div>
<svg style="left:243px;top:393px" width="11" height="14" viewBox="0 0 11 14" fill="none"><rect x="1" y="5.6" width="9" height="7.4" fill="#1e1e1e"/><path d="M2.9 6V4a2.6 2.6 0 0 1 5.2 0V6" stroke="#1e1e1e" stroke-width="1.25"/></svg>
<svg style="left:22px;top:433px" width="14" height="14" viewBox="0 0 14 14" fill="#000" shape-rendering="crispEdges"><rect x="1" y="1" width="10" height="2"/><rect x="1" y="6" width="12" height="2"/><rect x="1" y="11" width="7" height="2"/></svg>
<div class="t b" style="left:49px;top:430px;letter-spacing:0.10px">01. Login</div>
<svg style="left:243px;top:433px" width="11" height="14" viewBox="0 0 11 14" fill="none"><rect x="1" y="5.6" width="9" height="7.4" fill="#1e1e1e"/><path d="M2.9 6V4a2.6 2.6 0 0 1 5.2 0V6" stroke="#1e1e1e" stroke-width="1.25"/></svg>
<svg style="left:22px;top:473px" width="14" height="14" viewBox="0 0 14 14" fill="#000" shape-rendering="crispEdges"><rect x="1" y="1" width="10" height="2"/><rect x="1" y="6" width="12" height="2"/><rect x="1" y="11" width="7" height="2"/></svg>
<div class="t b" style="left:49px;top:470px;letter-spacing:0.27px">02. Deals</div>
<svg style="left:243px;top:473px" width="11" height="14" viewBox="0 0 11 14" fill="none"><rect x="1" y="5.6" width="9" height="7.4" fill="#1e1e1e"/><path d="M2.9 6V4a2.6 2.6 0 0 1 5.2 0V6" stroke="#1e1e1e" stroke-width="1.25"/></svg>
<svg style="left:22px;top:513px" width="14" height="14" viewBox="0 0 14 14" fill="#000" shape-rendering="crispEdges"><rect x="1" y="1" width="10" height="2"/><rect x="1" y="6" width="12" height="2"/><rect x="1" y="11" width="7" height="2"/></svg>
<div class="t b" style="left:49px;top:510px;letter-spacing:0.36px">03. Search Products</div>
<svg style="left:243px;top:513px" width="11" height="14" viewBox="0 0 11 14" fill="none"><rect x="1" y="5.6" width="9" height="7.4" fill="#1e1e1e"/><path d="M2.9 6V4a2.6 2.6 0 0 1 5.2 0V6" stroke="#1e1e1e" stroke-width="1.25"/></svg>
<svg style="left:22px;top:553px" width="14" height="14" viewBox="0 0 14 14" fill="#000" shape-rendering="crispEdges"><rect x="1" y="1" width="10" height="2"/><rect x="1" y="6" width="12" height="2"/><rect x="1" y="11" width="7" height="2"/></svg>
<div class="t b" style="left:49px;top:550px;letter-spacing:0.20px">03.1 Filter</div>
<svg style="left:243px;top:553px" width="11" height="14" viewBox="0 0 11 14" fill="none"><rect x="1" y="5.6" width="9" height="7.4" fill="#1e1e1e"/><path d="M2.9 6V4a2.6 2.6 0 0 1 5.2 0V6" stroke="#1e1e1e" stroke-width="1.25"/></svg>
<svg style="left:22px;top:593px" width="14" height="14" viewBox="0 0 14 14" fill="#000" shape-rendering="crispEdges"><rect x="1" y="1" width="10" height="2"/><rect x="1" y="6" width="12" height="2"/><rect x="1" y="11" width="7" height="2"/></svg>
<div class="t b" style="left:49px;top:590px;letter-spacing:0.46px">04. Product Detail</div>
<svg style="left:243px;top:593px" width="11" height="14" viewBox="0 0 11 14" fill="none"><rect x="1" y="5.6" width="9" height="7.4" fill="#1e1e1e"/><path d="M2.9 6V4a2.6 2.6 0 0 1 5.2 0V6" stroke="#1e1e1e" stroke-width="1.25"/></svg>
<svg style="left:22px;top:633px" width="14" height="14" viewBox="0 0 14 14" fill="#000" shape-rendering="crispEdges"><rect x="1" y="1" width="10" height="2"/><rect x="1" y="6" width="12" height="2"/><rect x="1" y="11" width="7" height="2"/></svg>
<div class="t b" style="left:49px;top:630px;letter-spacing:0.38px">05. Profile</div>
<svg style="left:243px;top:633px" width="11" height="14" viewBox="0 0 11 14" fill="none"><rect x="1" y="5.6" width="9" height="7.4" fill="#1e1e1e"/><path d="M2.9 6V4a2.6 2.6 0 0 1 5.2 0V6" stroke="#1e1e1e" stroke-width="1.25"/></svg>
<svg style="left:22px;top:673px" width="14" height="14" viewBox="0 0 14 14" fill="#000" shape-rendering="crispEdges"><rect x="1" y="1" width="10" height="2"/><rect x="1" y="6" width="12" height="2"/><rect x="1" y="11" width="7" height="2"/></svg>
<div class="t b" style="left:49px;top:670px;letter-spacing:0.44px">06. Cart</div>
<svg style="left:243px;top:673px" width="11" height="14" viewBox="0 0 11 14" fill="none"><rect x="1" y="5.6" width="9" height="7.4" fill="#1e1e1e"/><path d="M2.9 6V4a2.6 2.6 0 0 1 5.2 0V6" stroke="#1e1e1e" stroke-width="1.25"/></svg>
<svg style="left:22px;top:713px" width="15" height="15" viewBox="0 0 15 15" fill="none" stroke="#000" stroke-width="1.2"><path d="M4.6 .8v13.8M10.7 .8v13.8M.8 4.8h13.8M.8 10.5h13.8"/></svg>
<div class="t b" style="left:49px;top:710px;letter-spacing:0.36px">Preview</div>
<svg style="left:243px;top:713px" width="11" height="14" viewBox="0 0 11 14" fill="none"><rect x="1" y="5.6" width="9" height="7.4" fill="#1e1e1e"/><path d="M2.9 6V4a2.6 2.6 0 0 1 5.2 0V6" stroke="#1e1e1e" stroke-width="1.25"/></svg>
<svg style="left:22px;top:753px" width="15" height="15" viewBox="0 0 15 15" fill="none" stroke="#000" stroke-width="1.2"><path d="M4.6 .8v13.8M10.7 .8v13.8M.8 4.8h13.8M.8 10.5h13.8"/></svg>
<div class="t b" style="left:49px;top:750px;letter-spacing:0.51px">Start</div>
<svg style="left:243px;top:753px" width="11" height="14" viewBox="0 0 11 14" fill="none"><rect x="1" y="5.6" width="9" height="7.4" fill="#1e1e1e"/><path d="M2.9 6V4a2.6 2.6 0 0 1 5.2 0V6" stroke="#1e1e1e" stroke-width="1.25"/></svg>
<!--P1-->
</div>
</body></html>
